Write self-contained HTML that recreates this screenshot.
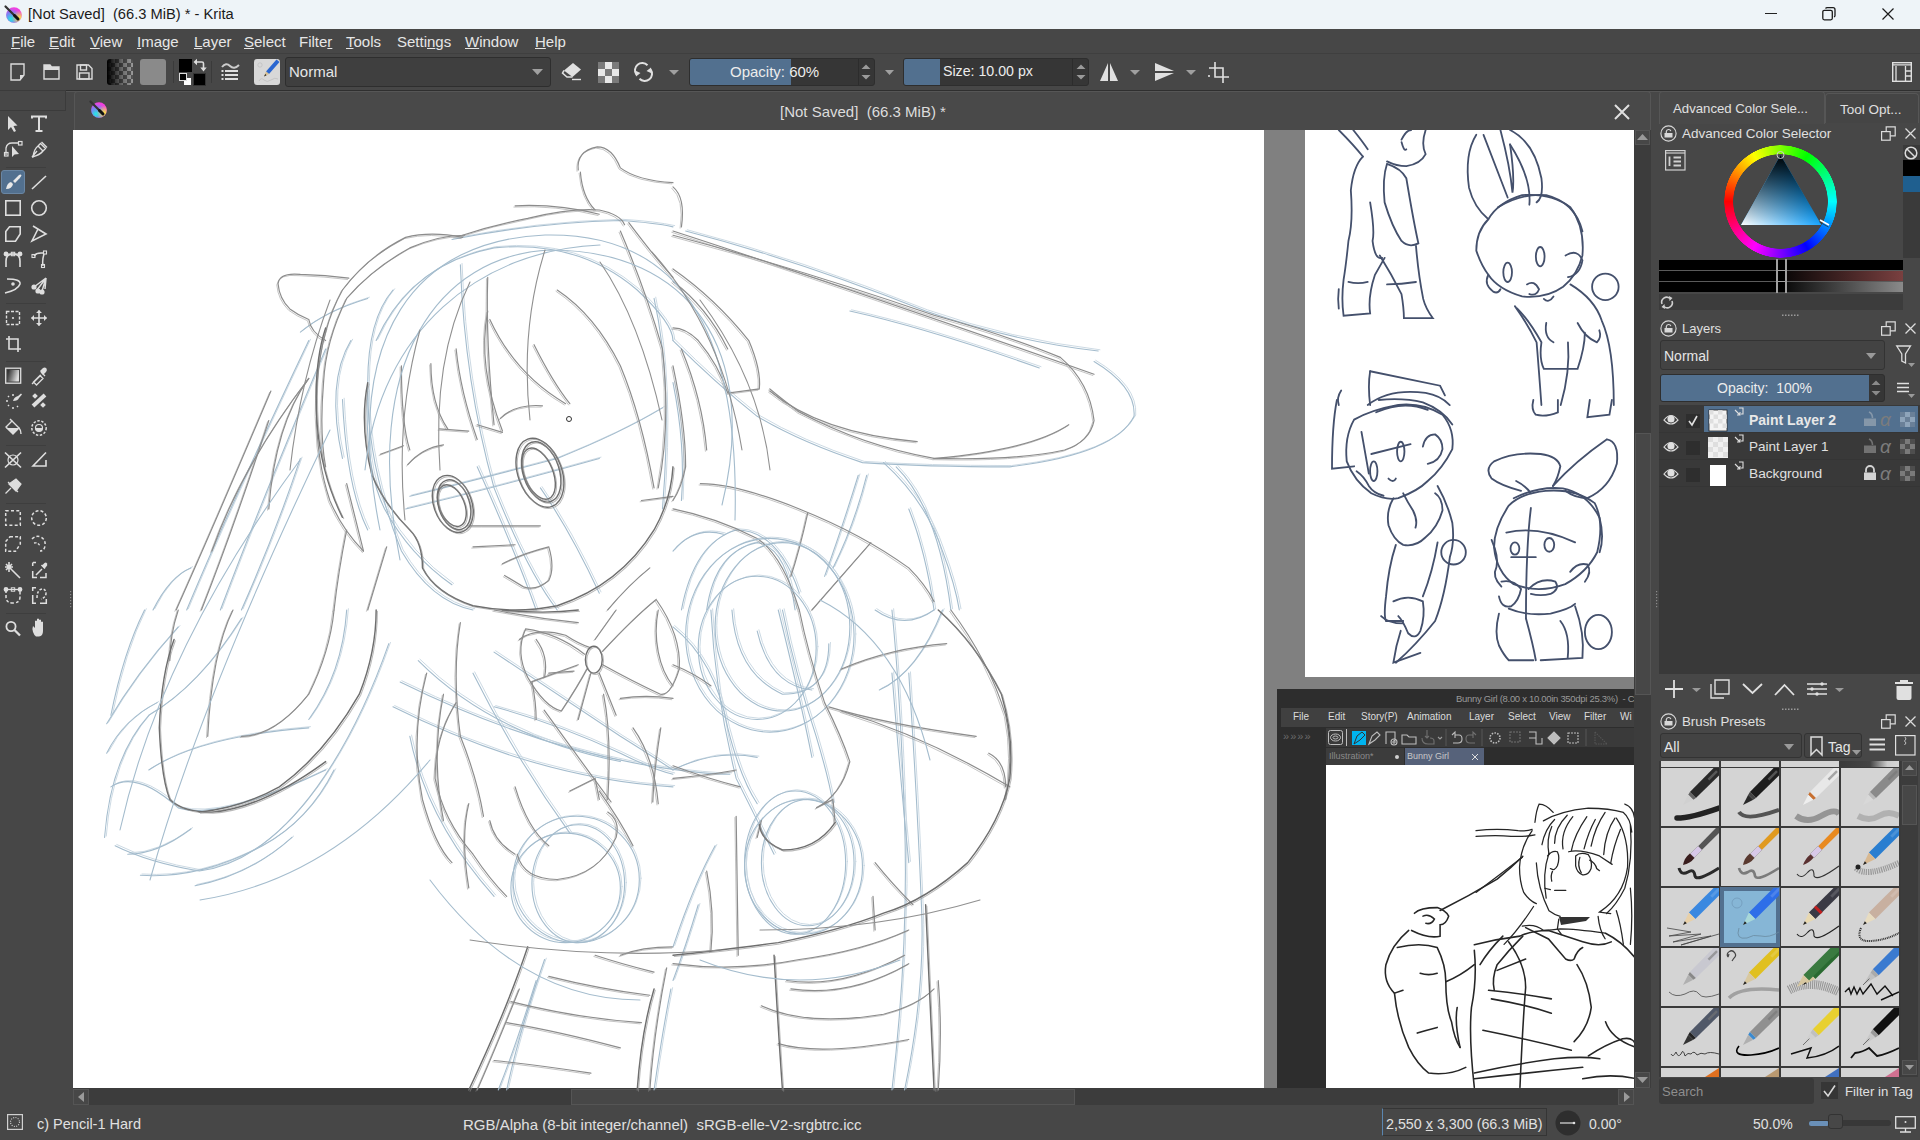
<!DOCTYPE html>
<html><head><meta charset="utf-8">
<style>
*{box-sizing:border-box;margin:0;padding:0}
html,body{width:1920px;height:1140px;overflow:hidden;background:#474747;font-family:"Liberation Sans",sans-serif;color:#e4e4e4;position:relative}
.a{position:absolute}
.t{position:absolute;white-space:nowrap;line-height:1}
svg{position:absolute;overflow:visible}
</style></head><body>
<!-- TITLE BAR -->
<div class="a" style="left:0;top:0;width:1920px;height:29px;background:#eef4f8"></div>
<svg style="left:4px;top:5px" width="18" height="18" viewBox="0 0 18 18">
 <defs><radialGradient id="kc1" cx="0.3" cy="0.75" r="0.7"><stop offset="0" stop-color="#20f0e0"/><stop offset="0.6" stop-color="#40a0ff" stop-opacity="0.6"/><stop offset="1" stop-color="#40a0ff" stop-opacity="0"/></radialGradient>
 <radialGradient id="kc2" cx="0.85" cy="0.7" r="0.5"><stop offset="0" stop-color="#ffe840"/><stop offset="1" stop-color="#ffe840" stop-opacity="0"/></radialGradient></defs>
 <circle cx="10" cy="10" r="7.8" fill="#f040e0"/><circle cx="10" cy="10" r="7.8" fill="url(#kc1)"/><circle cx="10" cy="10" r="7.8" fill="url(#kc2)"/>
 <path d="M1.5 1.5 L11 11" stroke="#333" stroke-width="2.2" stroke-linecap="round"/><path d="M10.5 10.5 L14 14" stroke="#111" stroke-width="3" stroke-linecap="round"/>
</svg>
<div class="t" style="left:28px;top:7px;font-size:14.7px;color:#1b1b1b">[Not Saved]&nbsp; (66.3 MiB) * - Krita</div>
<div class="a" style="left:1765px;top:13px;width:12px;height:1.3px;background:#222"></div>
<svg style="left:1822px;top:7px" width="14" height="14" viewBox="0 0 14 14"><rect x="0.8" y="3.3" width="9.5" height="9.5" rx="1.5" fill="none" stroke="#1b1b1b" stroke-width="1.3"/><path d="M3.5 1.5 Q4 0.7 5.2 0.7 H11 Q13 0.7 13 2.7 V8.5 Q13 9.6 12 10" fill="none" stroke="#1b1b1b" stroke-width="1.3"/></svg>
<svg style="left:1882px;top:8px" width="12" height="12" viewBox="0 0 12 12"><path d="M0.5 0.5 L11.5 11.5 M11.5 0.5 L0.5 11.5" stroke="#1b1b1b" stroke-width="1.2"/></svg>

<!-- MENU -->
<div class="a" style="left:0;top:53px;width:1920px;height:1px;background:#3f3f3f"></div>
<div id="menu" style="position:absolute;left:0;top:34px;font-size:15px;color:#e6e6e6">
<span class="t" style="left:11px"><u>F</u>ile</span>
<span class="t" style="left:49px"><u>E</u>dit</span>
<span class="t" style="left:90px"><u>V</u>iew</span>
<span class="t" style="left:137px"><u>I</u>mage</span>
<span class="t" style="left:194px"><u>L</u>ayer</span>
<span class="t" style="left:244px"><u>S</u>elect</span>
<span class="t" style="left:299px">Filte<u>r</u></span>
<span class="t" style="left:346px"><u>T</u>ools</span>
<span class="t" style="left:397px">Setti<u>n</u>gs</span>
<span class="t" style="left:465px"><u>W</u>indow</span>
<span class="t" style="left:535px"><u>H</u>elp</span>
</div>

<!-- TOOLBAR -->
<svg style="left:10px;top:63px" width="16" height="18" viewBox="0 0 16 18"><path d="M1 1 H14 V12 L10 17 H1 Z" fill="none" stroke="#dcdcdc" stroke-width="1.4"/><path d="M14 12 L10 17 V12 Z" fill="#dcdcdc"/></svg>
<svg style="left:43px;top:64px" width="17" height="16" viewBox="0 0 17 16"><path d="M1 15 V1 H7 L8.5 3 H16 V15 Z" fill="none" stroke="#dcdcdc" stroke-width="1.4"/><path d="M1 1 H7 L8.5 3 H16 V6 H1 Z" fill="#dcdcdc"/></svg>
<svg style="left:76px;top:64px" width="17" height="16" viewBox="0 0 17 16"><path d="M1 1 H12.5 L16 4.5 V15 H1 Z" fill="none" stroke="#dcdcdc" stroke-width="1.4"/><rect x="4.5" y="1" width="6" height="5" fill="none" stroke="#dcdcdc" stroke-width="1.4"/><rect x="3.5" y="9" width="9.5" height="6" fill="none" stroke="#dcdcdc" stroke-width="1.4"/></svg>
<div class="a" style="left:107px;top:59px;width:26px;height:26px;border-radius:3px;background:linear-gradient(90deg,#000 0%,rgba(0,0,0,0.3) 60%,rgba(0,0,0,0) 100%),repeating-conic-gradient(#9a9a9a 0 25%,#555 0 50%) 0 0/8px 8px"></div>
<div class="a" style="left:140px;top:59px;width:26px;height:26px;border-radius:3px;background:#8a8a8a"></div>
<div class="a" style="left:173px;top:61px;width:1px;height:22px;background:#3a3a3a"></div>
<div class="a" style="left:179px;top:59px;width:13px;height:13px;background:#000"></div>
<div class="a" style="left:193px;top:73px;width:13px;height:13px;background:#000;border:1px solid #333"></div>
<div class="a" style="left:184px;top:78px;width:7px;height:7px;background:#fff"></div>
<div class="a" style="left:179px;top:73px;width:8px;height:8px;background:#000;border:1px solid #ddd"></div>
<svg style="left:193px;top:58px" width="14" height="14" viewBox="0 0 14 14"><path d="M3 4 H9 Q10.5 4 10.5 5.5 V10" fill="none" stroke="#ddd" stroke-width="1.6"/><path d="M0.5 4 L4 0.8 V7.2 Z M10.5 13.5 L7.3 9.5 H13.7 Z" fill="#ddd"/></svg>
<div class="a" style="left:211px;top:61px;width:1px;height:22px;background:#3a3a3a"></div>
<svg style="left:221px;top:62px" width="20" height="20" viewBox="0 0 20 20"><path d="M1 5 Q5 0 9 4 T18 3" fill="none" stroke="#ccc" stroke-width="2"/><path d="M4 9 H17 M4 13 H17 M4 17 H17" stroke="#e0e0e0" stroke-width="1.8"/><path d="M0.5 9 H2.5 M0.5 13 H2.5 M0.5 17 H2.5" stroke="#e0e0e0" stroke-width="1.8"/></svg>
<div class="a" style="left:254px;top:59px;width:26px;height:26px;border-radius:3px;background:#d8d8d8"></div>
<svg style="left:254px;top:59px" width="26" height="26" viewBox="0 0 26 26"><circle cx="6" cy="6" r="2.2" fill="none" stroke="#bbb" stroke-width="0.6"/><path d="M5 22 Q7 18 10 21 T17 21 T24 20" fill="none" stroke="#bbb" stroke-width="0.7"/><path d="M25.5 3 L22.5 0.5 L12 12.5 L15 15 Z" fill="#2a66d0"/><path d="M12 12.5 L15 15 L10 17.5 Z" fill="#d8c090"/><path d="M10 17.5 L11.3 15 L12.5 16.3 Z" fill="#222"/></svg>
<!-- blend combo -->
<div class="a" style="left:285px;top:57px;width:266px;height:30px;border-radius:3px;background:#3f3f3f;border:1px solid #2e2e2e"></div>
<div class="t" style="left:289px;top:64px;font-size:15px;color:#e6e6e6">Normal</div>
<svg style="left:532px;top:69px" width="11" height="6" viewBox="0 0 11 6"><path d="M0 0 H11 L5.5 6 Z" fill="#a0a0a0"/></svg>
<!-- eraser etc -->
<svg style="left:562px;top:62px" width="20" height="19" viewBox="0 0 20 19"><path d="M11 1 L19 7.5 L10.5 15 L2 8.5 Z" fill="#e0e0e0"/><path d="M2 8.5 L0.5 11 L5 15 L10.5 15" fill="none" stroke="#e0e0e0" stroke-width="1.5"/><path d="M10 17.5 H19" stroke="#e0e0e0" stroke-width="1.4"/></svg>
<svg style="left:598px;top:62px" width="21" height="21" viewBox="0 0 21 21"><rect width="21" height="21" fill="#7a7a7a"/><path d="M7 0 H14 V7 H21 V14 H14 V21 H7 V14 H0 V7 H7 Z" fill="#e8e8e8"/><rect x="7" y="7" width="7" height="7" fill="#7a7a7a"/></svg>
<svg style="left:634px;top:63px" width="19" height="18" viewBox="0 0 19 18"><path d="M13.5 2.2 A7.3 7.3 0 0 0 2.3 11.5" fill="none" stroke="#e0e0e0" stroke-width="2"/><path d="M5.5 15.8 A7.3 7.3 0 0 0 16.7 6.5" fill="none" stroke="#e0e0e0" stroke-width="2"/><path d="M1 7.5 L2 13.5 L6.5 10 Z M18 10.5 L17 4.5 L12.5 8 Z" fill="#e0e0e0"/></svg>
<svg style="left:669px;top:70px" width="10" height="5" viewBox="0 0 10 5"><path d="M0 0 H10 L5 5 Z" fill="#a0a0a0"/></svg>
<!-- opacity slider -->
<div class="a" style="left:689px;top:58px;width:186px;height:28px;border-radius:3px;background:#363636;border:1px solid #2e2e2e;overflow:hidden"><div style="position:absolute;left:0;top:0;width:101px;height:28px;background:#52708f"></div><div style="position:absolute;left:168px;top:0;width:1px;height:28px;background:#2c2c2c"></div></div>
<svg style="left:860px;top:62px" width="12" height="20" viewBox="0 0 12 20"><path d="M1.5 7 L6 2.5 L10.5 7 Z M1.5 13 L6 17.5 L10.5 13 Z" fill="#9a9a9a"/></svg>
<div class="t" style="left:730px;top:64px;font-size:15px;color:#ececec">Opacity: 60%</div>
<svg style="left:885px;top:70px" width="9" height="5" viewBox="0 0 9 5"><path d="M0 0 H9 L4.5 5 Z" fill="#a0a0a0"/></svg>
<!-- size slider -->
<div class="a" style="left:903px;top:58px;width:186px;height:28px;border-radius:3px;background:#363636;border:1px solid #2e2e2e;overflow:hidden"><div style="position:absolute;left:0;top:0;width:36px;height:28px;background:#52708f"></div><div style="position:absolute;left:168px;top:0;width:1px;height:28px;background:#2c2c2c"></div></div>
<svg style="left:1075px;top:62px" width="12" height="20" viewBox="0 0 12 20"><path d="M1.5 7 L6 2.5 L10.5 7 Z M1.5 13 L6 17.5 L10.5 13 Z" fill="#9a9a9a"/></svg>
<div class="t" style="left:943px;top:64px;font-size:14.2px;color:#ececec">Size: 10.00 px</div>
<svg style="left:1099px;top:62px" width="20" height="20" viewBox="0 0 20 20"><path d="M9 1 L9 19 L1 19 Z M11 1 L11 19 L19 19 Z" fill="#e0e0e0"/></svg>
<svg style="left:1130px;top:70px" width="10" height="5" viewBox="0 0 10 5"><path d="M0 0 H10 L5 5 Z" fill="#a0a0a0"/></svg>
<svg style="left:1155px;top:62px" width="20" height="20" viewBox="0 0 20 20"><path d="M0 1 L19 9 L0 9 Z M0 11 L19 11 L0 19 Z" fill="#e0e0e0"/></svg>
<svg style="left:1186px;top:70px" width="10" height="5" viewBox="0 0 10 5"><path d="M0 0 H10 L5 5 Z" fill="#a0a0a0"/></svg>
<svg style="left:1209px;top:62px" width="20" height="21" viewBox="0 0 20 21"><path d="M6 0 V15 H20 M0 13 V15 M0 6 H14 V21" fill="none" stroke="#e0e0e0" stroke-width="1.6"/></svg>
<svg style="left:1892px;top:62px" width="20" height="20" viewBox="0 0 20 20"><rect x="0.7" y="0.7" width="18.6" height="18.6" fill="none" stroke="#e0e0e0" stroke-width="1.4"/><path d="M0.7 2.8 H19.3 M4 4 V19 M13.5 4 V19 M13.5 9 H19 M13.5 14 H19" fill="none" stroke="#e0e0e0" stroke-width="1.3"/></svg>
<div class="a" style="left:0;top:90px;width:1920px;height:1px;background:#2f2f2f"></div>
<div class="a" style="left:0;top:91px;width:1920px;height:1px;background:#565656"></div>

<!-- TOOLBOX -->
<div class="a" style="left:0;top:90px;width:66px;height:21px;border:1px solid #3b3b3b;border-left:none;background:#474747"></div>
<div class="a" style="left:6px;top:167px;width:40px;height:1px;background:#3e3e3e"></div>
<div class="a" style="left:6px;top:303px;width:40px;height:1px;background:#3e3e3e"></div>
<div class="a" style="left:6px;top:361px;width:40px;height:1px;background:#3e3e3e"></div>
<div class="a" style="left:6px;top:445px;width:40px;height:1px;background:#3e3e3e"></div>
<div class="a" style="left:6px;top:503px;width:40px;height:1px;background:#3e3e3e"></div>
<div class="a" style="left:6px;top:613px;width:40px;height:1px;background:#3e3e3e"></div>
<div class="a" style="left:1px;top:170px;width:24px;height:24px;border-radius:3px;background:#52708f;border:1px solid #6a86a3"></div>
<svg style="left:0;top:0" width="72" height="650" viewBox="0 0 72 650">
<g fill="none" stroke="#dedede" stroke-width="1.6">
 <!-- row1 arrow / T -->
 <path d="M8 116 L8 130 L11 127 L14 132 L16 131 L13.5 126 L17.5 125.5 Z" fill="#dedede" stroke="none"/>
 <path d="M32 118.5 V116.5 H46 V118.5 M39 116.5 V131 M35.5 131 H42.5" stroke-width="2"/>
 <!-- row2 shape select / calligraphy -->
 <path d="M6 155 V148 Q7 143 12 143 H19" stroke-width="1.3"/>
 <rect x="4.5" y="152.5" width="3.5" height="3.5" stroke-width="1.2"/><rect x="18.5" y="141.5" width="3.5" height="3.5" stroke-width="1.2"/>
 <path d="M12 146 L12 157 L14.5 154.5 L19 154 Z" fill="#dedede" stroke="none"/>
 <path d="M32 157 L37 151 M33 157 Q34 149 38 146 L43 151 Q40 155 32 157 Z M38 146 L40.5 143.5 L45.5 148.5 L43 151 M41.5 142 L47 147.5" stroke-width="1.4"/>
 <!-- row3 brush / line -->
 <path d="M6 189 Q7 183 11 182 L13 184 Q12 189 6 189 Z" fill="#e8e8e8" stroke="none"/>
 <path d="M13 181 L19 175 Q21 174 21.5 175.5 Q21 177 15 183 Z" fill="#e8e8e8" stroke="none"/>
 <path d="M32 189 L46 176" stroke-width="1.6"/>
 <!-- row4 rect / ellipse -->
 <rect x="5.8" y="200.8" width="14.4" height="14.4"/>
 <circle cx="39" cy="208" r="7.3"/>
 <!-- row5 polygon / polyline -->
 <path d="M9.5 226.8 H20.2 V234 L15.5 241.2 H5.8 V231.5 Z"/>
 <path d="M33 226 L46 234 L32 241 L38 229"/>
 <!-- row6 bezier / curve -->
 <path d="M6 267 V261 Q6 254 13 254 Q20 254 20 261 V267"/>
 <path d="M5 254 H21" stroke-width="1.1"/><circle cx="6" cy="254" r="1.6" fill="#dedede"/><circle cx="20" cy="254" r="1.6" fill="#dedede"/><rect x="11.3" y="252.3" width="3.4" height="3.4" stroke-width="1.1"/>
 <path d="M34 256 Q36 253 41 253 L44 253 M44 254 Q42 260 43 266" stroke-width="1.5"/><rect x="32" y="254.5" width="3" height="3" stroke-width="1.1"/><rect x="43.5" y="251" width="3" height="3" stroke-width="1.1"/><rect x="41.5" y="264.5" width="3" height="3" stroke-width="1.1"/>
 <!-- row7 freehand path / multibrush -->
 <path d="M7 279 Q21 279 20 284 Q18 290 5 293"/><circle cx="13" cy="284" r="1" fill="#dedede"/>
 <path d="M46 278 L34 287 M46 278 L37 290 M46 278 L42 291 M46 278 L45 289" stroke-width="1.5"/><circle cx="34" cy="287" r="1.8" fill="#dedede"/><circle cx="38" cy="291" r="1.8" fill="#dedede"/><circle cx="42" cy="292" r="1.8" fill="#dedede"/>
 <!-- row8 transform / move -->
 <rect x="6.5" y="311.5" width="13" height="13" stroke-width="1.4" stroke-dasharray="3 1.5"/><circle cx="13" cy="318" r="1.1" fill="#dedede" stroke="none"/>
 <path d="M31.5 318 H46.5 M39 310.5 V325.5" stroke-width="1.6"/><path d="M31 318 L34 315 V321 Z M47 318 L44 315 V321 Z M39 310 L36 313 H42 Z M39 326 L36 323 H42 Z" fill="#dedede" stroke="none"/>
 <!-- row9 crop -->
 <path d="M9 336 V349 H21 M6 339 H18 V352" stroke-width="1.6"/>
 <!-- row10 gradient / eyedropper -->
 <rect x="5.7" y="368.2" width="15" height="15" stroke-width="1.3"/>
 <path d="M33 383 L41 375 M33 383 L32 384 M41 372 L45 376 M33.5 382 L40 375.5 L43 378.5 L36.5 385 Z" stroke-width="1.3"/><path d="M40 371 L43 368 Q45 367 46.5 368.5 Q47.5 370 46 372 L43 375 Z" fill="#dedede" stroke="none"/>
 <!-- row11 smart patch / assistant-ish -->
 <path d="M13 401 Q14 397 18 396 L19 398 Q18 401 13 401 Z M18 396 L21 393.5 L22 394.5 L19 398" fill="#dedede" stroke="none"/>
 <path d="M6 401 H8 M13 407 V409 M8 396 L9 397 M8 406 L9 405 M17 406 L18 407 M13 394 V396" stroke-width="1.5"/>
 <path d="M33 406 L45 395" stroke-width="4"/><rect x="33" y="394" width="4" height="4" fill="#dedede" stroke="none" transform="rotate(45 35 396)"/><rect x="41" y="403" width="4" height="4" fill="#dedede" stroke="none" transform="rotate(45 43 405)"/>
 <!-- row12 fill / enclose fill -->
 <path d="M6 427 L12 421 L19 428 L13 434 Z" stroke-width="1.4"/><path d="M6 428 L19 428 L13 434 Z" fill="#dedede" stroke="none"/><path d="M12 421 L10 419" stroke-width="1.4"/><path d="M19 428 Q21 430 21 434" stroke-width="1.4"/>
 <circle cx="39" cy="428" r="7.2" stroke-width="1.5" stroke-dasharray="2.4 1.6"/><circle cx="39" cy="428" r="3.5" stroke-width="1.2"/><path d="M35.5 428 A3.5 3.5 0 0 0 42.5 428 Z" fill="#dedede" stroke="none"/>
 <!-- row13 assistant / measure -->
 <path d="M5 452.5 L21 467.5 M21 452.5 L5 467.5" stroke-width="1.7"/><circle cx="13" cy="460" r="5" stroke-width="1.2"/>
 <path d="M46 452.5 L33 466 H46 V460" stroke-width="1.6"/>
 <!-- row14 pin -->
 <path d="M5.5 493.5 L11 488" stroke-width="1.2"/><path d="M9 484 L16 479 L21 484 L16 491 Z M8 482 L18 492" fill="#dedede" stroke="#dedede" stroke-width="1.2"/>
 <!-- row15 rect select / ellipse select -->
 <rect x="5.7" y="510.7" width="14.6" height="14.6" stroke-width="1.5" stroke-dasharray="3 2.3"/>
 <circle cx="39" cy="518" r="7.3" stroke-width="1.5" stroke-dasharray="3 2.1"/>
 <!-- row16 poly select / freehand select -->
 <path d="M10 536.7 H20.3 V544 L15.5 551.3 H5.7 V541.5 Z" stroke-width="1.5" stroke-dasharray="3 2.1"/>
 <path d="M32 539 Q36 535 41 537 Q46 540 45 546 Q44 551 40 551" stroke-width="1.5" stroke-dasharray="3 2.1"/><path d="M34 543 Q38 542 40 546" stroke-width="1.3" stroke-dasharray="2.5 1.5"/>
 <!-- row17 magic wand / color select -->
 <path d="M6 564 L12 570 M6 570 L12 564 M9 562 V572 M5 567 H13 M11 569 L20 578" stroke-width="1.6"/>
 <path d="M33 562.5 H36 M32.7 562.5 V566 M32.7 571 V577.5 H37 M40 577.5 H46 V573" stroke-width="1.5"/><path d="M36 575 L42 569 M41.5 565 L45 568.5" stroke-width="1.5"/><path d="M42 565.5 L44.5 563 Q46 562 47 563.5 Q48 565 46 567 L44.5 568.5 Z" fill="#dedede" stroke="none"/>
 <!-- row18 bezier select / magnetic -->
 <path d="M6 590 V597 Q6 603 13 603 Q20 603 20 597 V590" stroke-width="1.5" stroke-dasharray="3 2"/><path d="M6 589.5 H20" stroke-width="1.3"/><circle cx="6" cy="589.5" r="1.6" fill="#dedede"/><circle cx="20" cy="589.5" r="1.6" fill="#dedede"/><rect x="11.3" y="587.8" width="3.4" height="3.4" stroke-width="1"/>
 <path d="M32.7 591 V587.7 H36 M32.7 595 V603.3 H36 M40 603.3 H46.3 V599" stroke-width="1.5"/><path d="M37 598 Q37 590 42 589 Q46 589 46 594 Q45 598 41 599" stroke-width="1.5" stroke-dasharray="2.6 1.6"/>
 <!-- row19 zoom / hand -->
 <circle cx="11" cy="626.5" r="4.6" stroke-width="1.8"/><path d="M14.5 630 L20 635.5" stroke-width="2.3"/>
 <path d="M33 632 Q32 628 33 626 L35 628 V621 Q36 620 37 621 V626 V619 Q38 618 39 619 V626 V620 Q40 619 41 620 V626 V622 Q42 621 43 622 V631 Q43 636 39 636.5 H36 Q34 635 33 632 Z" fill="#dedede" stroke="none"/>
</g>
<!-- gradient fill -->
<defs><linearGradient id="gr1" x1="0" y1="0" x2="1" y2="0.3"><stop offset="0" stop-color="#222"/><stop offset="1" stop-color="#ddd"/></linearGradient></defs>
<rect x="7.5" y="370" width="11.5" height="11.5" fill="url(#gr1)"/>
<!-- splitter dots -->
<g fill="#8a8a8a"><rect x="70" y="591" width="1.2" height="1.2"/><rect x="70" y="594" width="1.2" height="1.2"/><rect x="70" y="597" width="1.2" height="1.2"/><rect x="70" y="600" width="1.2" height="1.2"/><rect x="70" y="603" width="1.2" height="1.2"/><rect x="70" y="606" width="1.2" height="1.2"/></g>
</svg>

<!-- DOC TAB BAR -->
<div class="a" style="left:74px;top:91px;width:1577px;height:45px;border:1px solid #565656;border-bottom:none;border-radius:4px 4px 0 0;background:#494949"></div>
<svg style="left:89px;top:100px" width="18" height="18" viewBox="0 0 18 18">
 <defs><radialGradient id="kd1" cx="0.3" cy="0.75" r="0.7"><stop offset="0" stop-color="#20f0e0"/><stop offset="0.6" stop-color="#40a0ff" stop-opacity="0.6"/><stop offset="1" stop-color="#40a0ff" stop-opacity="0"/></radialGradient>
 <radialGradient id="kd2" cx="0.85" cy="0.7" r="0.5"><stop offset="0" stop-color="#ffe840"/><stop offset="1" stop-color="#ffe840" stop-opacity="0"/></radialGradient></defs>
 <circle cx="10" cy="10" r="7.8" fill="#f040e0"/><circle cx="10" cy="10" r="7.8" fill="url(#kd1)"/><circle cx="10" cy="10" r="7.8" fill="url(#kd2)"/>
 <path d="M1.5 1.5 L11 11" stroke="#333" stroke-width="2.2" stroke-linecap="round"/><path d="M10.5 10.5 L14 14" stroke="#111" stroke-width="3" stroke-linecap="round"/>
</svg>
<div class="t" style="left:780px;top:104px;font-size:15px;color:#dcdcdc">[Not Saved]&nbsp; (66.3 MiB) *</div>
<svg style="left:1614px;top:104px" width="16" height="16" viewBox="0 0 16 16"><path d="M1 1 L15 15 M15 1 L1 15" stroke="#e0e0e0" stroke-width="2"/></svg>

<!-- CANVAS -->
<div class="a" style="left:73px;top:130px;width:1191px;height:958px;background:#fff"></div>
<div class="a" style="left:1264px;top:130px;width:370px;height:958px;background:#808080"></div>
<div class="a" style="left:1305px;top:130px;width:329px;height:547px;background:#fff"></div>

<!-- V SCROLLBAR -->
<div class="a" style="left:1634px;top:130px;width:17px;height:958px;background:#3c3c3c"></div>
<div class="a" style="left:1635px;top:130px;width:15px;height:15px;border:1px solid #555;background:#474747"></div>
<svg style="left:1637px;top:134px" width="11" height="6" viewBox="0 0 11 6"><path d="M0 6 L5.5 0 L11 6 Z" fill="#9a9a9a"/></svg>
<div class="a" style="left:1635px;top:433px;width:16px;height:262px;border:1px solid #555;background:#474747"></div>
<div class="a" style="left:1635px;top:1072px;width:15px;height:16px;border:1px solid #555;background:#474747"></div>
<svg style="left:1637px;top:1077px" width="11" height="6" viewBox="0 0 11 6"><path d="M0 0 L5.5 6 L11 0 Z" fill="#9a9a9a"/></svg>

<!-- H SCROLLBAR -->
<div class="a" style="left:73px;top:1088px;width:1561px;height:17px;background:#3c3c3c"></div>
<div class="a" style="left:73px;top:1089px;width:16px;height:16px;border:1px solid #555;background:#474747"></div>
<svg style="left:78px;top:1092px" width="6" height="10" viewBox="0 0 6 10"><path d="M6 0 L0 5 L6 10 Z" fill="#9a9a9a"/></svg>
<div class="a" style="left:571px;top:1089px;width:504px;height:16px;border:1px solid #555;background:#474747"></div>
<div class="a" style="left:1618px;top:1089px;width:16px;height:16px;border:1px solid #555;background:#474747"></div>
<svg style="left:1624px;top:1092px" width="6" height="10" viewBox="0 0 6 10"><path d="M0 0 L6 5 L0 10 Z" fill="#9a9a9a"/></svg>
<div class="a" style="left:1634px;top:1088px;width:17px;height:17px;background:#474747"></div>

<!-- STATUS BAR -->
<svg style="left:7px;top:1114px" width="16" height="16" viewBox="0 0 16 16"><rect x="0.6" y="0.6" width="14.8" height="14.8" fill="none" stroke="#d0d0d0" stroke-width="1.2"/><circle cx="8" cy="8" r="4.5" fill="none" stroke="#d0d0d0" stroke-width="1.2" stroke-dasharray="1 1.35"/></svg>
<div class="t" style="left:37px;top:1117px;font-size:14.5px;color:#e0e0e0">c) Pencil-1 Hard</div>
<div class="t" style="left:463px;top:1117px;font-size:15px;color:#e0e0e0">RGB/Alpha (8-bit integer/channel)&nbsp; sRGB-elle-V2-srgbtrc.icc</div>
<div class="a" style="left:1382px;top:1108px;width:165px;height:28px;border:1px solid #353535;border-left:1px solid #5a86b0"></div>
<div class="t" style="left:1386px;top:1117px;font-size:14.3px;color:#e0e0e0">2,550 <u>x</u> 3,300 (66.3 MiB)</div>
<svg style="left:1555px;top:1110px" width="26" height="26" viewBox="0 0 26 26"><circle cx="13" cy="13" r="12.5" fill="#2e2e2e"/><path d="M5 13 H18" stroke="#e0e0e0" stroke-width="1.2"/><circle cx="19" cy="13" r="1.3" fill="#e0e0e0"/></svg>
<div class="t" style="left:1589px;top:1117px;font-size:14px;color:#e0e0e0">0.00°</div>
<div class="t" style="left:1753px;top:1117px;font-size:14px;color:#e0e0e0">50.0%</div>
<div class="a" style="left:1809px;top:1120px;width:82px;height:6px;border-radius:3px;background:#383838"></div>
<div class="a" style="left:1809px;top:1121px;width:20px;height:5px;border-radius:2px;background:#6a90b8"></div>
<div class="a" style="left:1828px;top:1114px;width:15px;height:15px;border-radius:3px;background:#474747;border:1px solid #333"></div>
<svg style="left:1895px;top:1116px" width="21" height="17" viewBox="0 0 21 17"><rect x="0.7" y="0.7" width="19.6" height="11.5" fill="none" stroke="#e0e0e0" stroke-width="1.3"/><path d="M10.5 12 V15.5 M5 16 H16" stroke="#e0e0e0" stroke-width="1.3"/><circle cx="10.5" cy="6" r="1" fill="#e0e0e0"/></svg>

<svg style="left:73px;top:130px" width="1191" height="958" viewBox="73 130 1191 958"><g fill="none" stroke-linecap="round">
<g transform="translate(73 130) scale(0.42105)">
<g stroke="#a4bccd" stroke-width="2.6"><path d="M720 500 Q800 320 1000 280 Q1200 260 1340 380 Q1425 460 1425 500"/><path d="M700 620 Q700 800 780 1000 Q850 1120 950 1140"/><path d="M640 640 Q650 850 700 950"/><path d="M660 500 Q600 600 640 780"/><path d="M760 380 Q700 450 700 600 Q690 800 740 900 Q800 1010 900 1080"/><path d="M800 870 Q1000 820 1150 780 Q1300 720 1400 660"/><path d="M790 900 Q1000 850 1250 780"/><path d="M920 320 Q930 600 1000 850 Q1080 1050 1150 1140"/><path d="M960 800 Q1050 1000 1100 1140"/><path d="M1110 850 Q1180 950 1250 1100"/><path d="M270 1140 Q370 900 560 500"/><path d="M350 1140 Q440 900 600 520"/><path d="M400 1140 Q480 960 540 780"/><path d="M540 480 Q600 430 700 400"/><path d="M900 260 Q1100 220 1300 215 Q1380 220 1425 230"/><path d="M1380 400 Q1425 600 1400 900"/><path d="M190 1140 Q230 1060 280 1040"/></g>
<g stroke="#a4bccd" stroke-width="2.2" opacity="0.6" transform="translate(4 -3)"><path d="M720 500 Q800 320 1000 280 Q1200 260 1340 380 Q1425 460 1425 500"/><path d="M700 620 Q700 800 780 1000 Q850 1120 950 1140"/><path d="M640 640 Q650 850 700 950"/><path d="M660 500 Q600 600 640 780"/><path d="M760 380 Q700 450 700 600 Q690 800 740 900 Q800 1010 900 1080"/><path d="M800 870 Q1000 820 1150 780 Q1300 720 1400 660"/><path d="M790 900 Q1000 850 1250 780"/><path d="M920 320 Q930 600 1000 850 Q1080 1050 1150 1140"/><path d="M960 800 Q1050 1000 1100 1140"/><path d="M1110 850 Q1180 950 1250 1100"/><path d="M270 1140 Q370 900 560 500"/><path d="M350 1140 Q440 900 600 520"/><path d="M400 1140 Q480 960 540 780"/><path d="M540 480 Q600 430 700 400"/><path d="M900 260 Q1100 220 1300 215 Q1380 220 1425 230"/><path d="M1380 400 Q1425 600 1400 900"/><path d="M190 1140 Q230 1060 280 1040"/></g>
<g stroke="#8c8c8c" stroke-width="2.8"><path d="M655 352 Q600 345 540 343 Q490 338 487 365 Q490 400 515 425 Q535 440 560 450 Q565 480 600 500"/><path d="M925 255 Q850 240 790 255 Q700 300 640 380 Q590 470 580 600 Q570 760 610 880 Q640 950 690 1000"/><path d="M930 250 Q870 250 800 280 Q710 330 650 400 Q600 500 595 600 Q585 720 600 800"/><path d="M925 250 Q1000 225 1080 210 Q1180 185 1250 190 Q1300 200 1310 225"/><path d="M1050 180 Q1150 175 1250 200"/><path d="M1200 95 Q1195 50 1245 40 Q1280 40 1300 90 Q1340 120 1425 125"/><path d="M1205 100 Q1210 160 1240 190"/><path d="M985 350 Q980 500 1000 700"/><path d="M985 430 Q960 560 1020 715"/><path d="M1150 380 Q1240 440 1300 560 Q1350 680 1380 850"/><path d="M1095 510 Q1140 600 1180 650"/><path d="M990 450 Q1050 580 1170 650"/><path d="M910 520 Q920 620 960 735"/><path d="M850 555 Q850 650 890 710"/><path d="M780 560 Q780 700 800 760"/><path d="M870 710 L940 715"/><path d="M960 700 L1020 718"/><path d="M1320 220 Q1380 300 1425 350"/><path d="M1300 240 Q1360 380 1400 520 Q1420 700 1390 850"/><path d="M1015 685 Q1050 650 1115 655"/><path d="M795 795 Q830 755 880 748"/><path d="M730 770 L785 750"/><path d="M1020 1030 Q1070 1005 1130 990 Q1145 1040 1130 1070 Q1100 1095 1070 1085 L1025 1058"/><path d="M940 940 Q1000 940 1110 940"/><path d="M950 990 L1050 985"/><path d="M245 1140 Q330 950 470 620"/><path d="M305 1140 Q380 950 465 690"/><path d="M330 1000 Q400 800 560 590"/><path d="M465 900 Q480 700 560 590"/><path d="M620 1140 Q630 1050 650 950"/><path d="M700 1140 L745 990"/><path d="M650 840 Q670 920 690 1000"/><path d="M1270 1140 Q1320 1080 1370 1040"/><path d="M1350 880 L1425 870"/></g>
<g stroke="#8c8c8c" stroke-width="2.2" opacity="0.55" transform="translate(-3 3)"><path d="M655 352 Q600 345 540 343 Q490 338 487 365 Q490 400 515 425 Q535 440 560 450 Q565 480 600 500"/><path d="M925 255 Q850 240 790 255 Q700 300 640 380 Q590 470 580 600 Q570 760 610 880 Q640 950 690 1000"/><path d="M930 250 Q870 250 800 280 Q710 330 650 400 Q600 500 595 600 Q585 720 600 800"/><path d="M925 250 Q1000 225 1080 210 Q1180 185 1250 190 Q1300 200 1310 225"/><path d="M1050 180 Q1150 175 1250 200"/><path d="M1200 95 Q1195 50 1245 40 Q1280 40 1300 90 Q1340 120 1425 125"/><path d="M1205 100 Q1210 160 1240 190"/><path d="M985 350 Q980 500 1000 700"/><path d="M985 430 Q960 560 1020 715"/><path d="M1150 380 Q1240 440 1300 560 Q1350 680 1380 850"/><path d="M1095 510 Q1140 600 1180 650"/><path d="M990 450 Q1050 580 1170 650"/><path d="M910 520 Q920 620 960 735"/><path d="M850 555 Q850 650 890 710"/><path d="M780 560 Q780 700 800 760"/><path d="M870 710 L940 715"/><path d="M960 700 L1020 718"/><path d="M1320 220 Q1380 300 1425 350"/><path d="M1300 240 Q1360 380 1400 520 Q1420 700 1390 850"/><path d="M1015 685 Q1050 650 1115 655"/><path d="M795 795 Q830 755 880 748"/><path d="M730 770 L785 750"/><path d="M1020 1030 Q1070 1005 1130 990 Q1145 1040 1130 1070 Q1100 1095 1070 1085 L1025 1058"/><path d="M940 940 Q1000 940 1110 940"/><path d="M950 990 L1050 985"/><path d="M245 1140 Q330 950 470 620"/><path d="M305 1140 Q380 950 465 690"/><path d="M330 1000 Q400 800 560 590"/><path d="M465 900 Q480 700 560 590"/><path d="M620 1140 Q630 1050 650 950"/><path d="M700 1140 L745 990"/><path d="M650 840 Q670 920 690 1000"/><path d="M1270 1140 Q1320 1080 1370 1040"/><path d="M1350 880 L1425 870"/></g>
<g stroke="#6e6e6e" stroke-width="3.4"><path d="M700 600 Q680 700 710 820 Q740 890 800 950 Q830 980 830 1040 Q860 1100 950 1130 Q1050 1150 1150 1130 Q1300 1080 1380 950 Q1420 880 1425 800"/><path d="M600 470 Q570 560 580 700 Q590 820 640 920"/><ellipse cx="902" cy="888" rx="45" ry="70" transform="rotate(-20 902 888)"/><ellipse cx="905" cy="890" rx="37" ry="61" transform="rotate(-18 905 890)"/><ellipse cx="900" cy="892" rx="30" ry="52" transform="rotate(-22 900 892)"/><ellipse cx="1109" cy="814" rx="52" ry="85" transform="rotate(-20 1109 814)"/><ellipse cx="1112" cy="812" rx="43" ry="74" transform="rotate(-18 1112 812)"/><ellipse cx="1106" cy="816" rx="34" ry="64" transform="rotate(-22 1106 816)"/></g>
<g stroke="#8c8c8c" stroke-width="2.4" opacity="0.6" transform="translate(3 3)"><path d="M700 600 Q680 700 710 820 Q740 890 800 950 Q830 980 830 1040 Q860 1100 950 1130 Q1050 1150 1150 1130 Q1300 1080 1380 950 Q1420 880 1425 800"/><path d="M600 470 Q570 560 580 700 Q590 820 640 920"/><ellipse cx="902" cy="888" rx="45" ry="70" transform="rotate(-20 902 888)"/><ellipse cx="905" cy="890" rx="37" ry="61" transform="rotate(-18 905 890)"/><ellipse cx="900" cy="892" rx="30" ry="52" transform="rotate(-22 900 892)"/><ellipse cx="1109" cy="814" rx="52" ry="85" transform="rotate(-20 1109 814)"/><ellipse cx="1112" cy="812" rx="43" ry="74" transform="rotate(-18 1112 812)"/><ellipse cx="1106" cy="816" rx="34" ry="64" transform="rotate(-22 1106 816)"/></g>
</g>
<g transform="translate(673 130) scale(0.42105)">
<g stroke="#a4bccd" stroke-width="2.6"><path d="M30 240 Q300 310 600 430 Q800 500 1010 525"/><path d="M420 430 Q600 470 870 565"/><path d="M1000 550 Q1100 610 1095 680 Q1050 770 800 800 Q600 800 450 790 Q300 740 200 680 Q100 600 0 500"/><path d="M440 820 Q400 950 360 1060"/><path d="M460 820 Q430 940 380 1040"/><path d="M500 790 Q600 880 640 1000 Q670 1080 680 1140"/><path d="M530 800 Q630 900 660 1140"/><path d="M560 900 Q600 1000 620 1140"/><path d="M20 1140 Q50 980 150 950 Q250 950 300 1100"/><path d="M80 1140 Q100 1000 200 980 Q270 990 290 1140"/><path d="M0 1000 Q50 940 120 960"/><path d="M0 600 Q30 750 20 880"/></g>
<g stroke="#a4bccd" stroke-width="2.2" opacity="0.6" transform="translate(4 -3)"><path d="M30 240 Q300 310 600 430 Q800 500 1010 525"/><path d="M420 430 Q600 470 870 565"/><path d="M1000 550 Q1100 610 1095 680 Q1050 770 800 800 Q600 800 450 790 Q300 740 200 680 Q100 600 0 500"/><path d="M440 820 Q400 950 360 1060"/><path d="M460 820 Q430 940 380 1040"/><path d="M500 790 Q600 880 640 1000 Q670 1080 680 1140"/><path d="M530 800 Q630 900 660 1140"/><path d="M560 900 Q600 1000 620 1140"/><path d="M20 1140 Q50 980 150 950 Q250 950 300 1100"/><path d="M80 1140 Q100 1000 200 980 Q270 990 290 1140"/><path d="M0 1000 Q50 940 120 960"/><path d="M0 600 Q30 750 20 880"/></g>
<g stroke="#8c8c8c" stroke-width="2.8"><path d="M0 250 Q300 330 620 440 Q800 490 920 540 Q990 600 1000 690 Q990 740 930 760 Q820 785 620 780 Q450 750 300 670 Q260 640 230 615"/><path d="M0 240 Q400 370 1000 580"/><path d="M230 620 Q350 720 580 740"/><path d="M940 700 Q850 760 620 780"/><path d="M0 330 Q100 400 180 500 Q210 570 205 615 L130 625 Q110 560 60 500 Q30 470 0 470"/><path d="M20 520 Q70 640 80 760"/><path d="M0 560 Q30 700 30 800 Q20 850 0 880"/><path d="M0 135 Q30 160 20 230"/><path d="M65 840 Q150 840 300 900 Q450 960 560 1040 Q600 1080 620 1120"/><path d="M0 900 Q100 920 200 970 Q260 1010 300 1140"/><path d="M320 910 Q300 1000 280 1060"/><path d="M470 980 Q400 1060 330 1140"/><path d="M0 360 Q80 420 130 520"/></g>
<g stroke="#8c8c8c" stroke-width="2.2" opacity="0.55" transform="translate(-3 3)"><path d="M0 250 Q300 330 620 440 Q800 490 920 540 Q990 600 1000 690 Q990 740 930 760 Q820 785 620 780 Q450 750 300 670 Q260 640 230 615"/><path d="M0 240 Q400 370 1000 580"/><path d="M230 620 Q350 720 580 740"/><path d="M940 700 Q850 760 620 780"/><path d="M0 330 Q100 400 180 500 Q210 570 205 615 L130 625 Q110 560 60 500 Q30 470 0 470"/><path d="M20 520 Q70 640 80 760"/><path d="M0 560 Q30 700 30 800 Q20 850 0 880"/><path d="M0 135 Q30 160 20 230"/><path d="M65 840 Q150 840 300 900 Q450 960 560 1040 Q600 1080 620 1120"/><path d="M0 900 Q100 920 200 970 Q260 1010 300 1140"/><path d="M320 910 Q300 1000 280 1060"/><path d="M470 980 Q400 1060 330 1140"/><path d="M0 360 Q80 420 130 520"/></g>
<g stroke="#6e6e6e" stroke-width="3.4"></g>
<g stroke="#8c8c8c" stroke-width="2.4" opacity="0.6" transform="translate(3 3)"></g>
</g>
<g transform="translate(73 610) scale(0.42105)">
<g stroke="#a4bccd" stroke-width="2.6"><path d="M80 270 Q150 150 250 40"/><path d="M75 540 Q90 350 180 250 Q300 180 400 20"/><path d="M90 420 Q150 380 250 470 Q350 500 600 380"/><path d="M100 560 Q180 600 300 620 Q450 600 580 420 Q680 280 750 80"/><path d="M160 630 Q300 640 450 560 Q560 500 620 380"/><path d="M290 655 Q420 630 520 540"/><path d="M130 580 Q200 580 280 520"/><path d="M80 340 Q120 260 200 220"/><path d="M180 380 Q300 300 560 280"/><path d="M950 150 Q1050 350 1180 530"/><path d="M1000 100 Q1150 200 1300 300 Q1380 350 1425 380"/><path d="M1000 230 Q1150 270 1300 340 Q1380 380 1425 390"/><path d="M1120 830 Q1060 1000 1030 1140"/><path d="M1100 880 Q1050 1040 1010 1140"/><path d="M1420 900 Q1400 1000 1380 1140"/><path d="M800 300 Q840 500 1000 680"/><path d="M170 0 Q120 100 90 250"/><path d="M650 0 Q640 150 560 260"/><path d="M777 171 Q1100 330 1401 375 Q1500 390 1560 390"/><path d="M760 230 Q1100 400 1425 420"/><path d="M820 120 Q1000 300 1300 360"/><ellipse cx="1195" cy="640" rx="150" ry="150" transform="rotate(0 1195 640)"/><ellipse cx="1200" cy="650" rx="110" ry="140" transform="rotate(0 1200 650)"/><ellipse cx="1170" cy="660" rx="130" ry="130" transform="rotate(0 1170 660)"/></g>
<g stroke="#a4bccd" stroke-width="2.2" opacity="0.6" transform="translate(4 -3)"><path d="M80 270 Q150 150 250 40"/><path d="M75 540 Q90 350 180 250 Q300 180 400 20"/><path d="M90 420 Q150 380 250 470 Q350 500 600 380"/><path d="M100 560 Q180 600 300 620 Q450 600 580 420 Q680 280 750 80"/><path d="M160 630 Q300 640 450 560 Q560 500 620 380"/><path d="M290 655 Q420 630 520 540"/><path d="M130 580 Q200 580 280 520"/><path d="M80 340 Q120 260 200 220"/><path d="M180 380 Q300 300 560 280"/><path d="M950 150 Q1050 350 1180 530"/><path d="M1000 100 Q1150 200 1300 300 Q1380 350 1425 380"/><path d="M1000 230 Q1150 270 1300 340 Q1380 380 1425 390"/><path d="M1120 830 Q1060 1000 1030 1140"/><path d="M1100 880 Q1050 1040 1010 1140"/><path d="M1420 900 Q1400 1000 1380 1140"/><path d="M800 300 Q840 500 1000 680"/><path d="M170 0 Q120 100 90 250"/><path d="M650 0 Q640 150 560 260"/><path d="M777 171 Q1100 330 1401 375 Q1500 390 1560 390"/><path d="M760 230 Q1100 400 1425 420"/><path d="M820 120 Q1000 300 1300 360"/><ellipse cx="1195" cy="640" rx="150" ry="150" transform="rotate(0 1195 640)"/><ellipse cx="1200" cy="650" rx="110" ry="140" transform="rotate(0 1200 650)"/><ellipse cx="1170" cy="660" rx="130" ry="130" transform="rotate(0 1170 660)"/></g>
<g stroke="#8c8c8c" stroke-width="2.8"><path d="M250 0 Q230 60 230 120"/><path d="M620 0 Q610 100 560 200 Q480 300 400 300"/><path d="M380 0 Q330 100 320 300"/><path d="M920 30 Q900 150 920 300 Q960 400 975 490"/><path d="M910 220 Q860 300 860 400 Q880 500 950 580 Q990 640 1030 680"/><path d="M940 460 Q920 540 940 660"/><path d="M990 500 Q1000 550 1050 580"/><path d="M1055 580 Q1070 640 1150 640 Q1250 630 1290 540 Q1300 500 1270 480"/><path d="M1060 70 Q1100 40 1170 60 Q1200 80 1230 90"/><path d="M1215 105 Q1150 55 1075 45 Q1050 100 1080 160 Q1120 230 1160 240 Q1200 180 1222 138"/><path d="M1258 98 Q1330 20 1385 -25 Q1445 60 1440 140 Q1420 205 1395 200 Q1330 170 1258 130"/><path d="M1230 150 L1200 260"/><path d="M1250 150 L1290 250"/><path d="M1100 70 Q1130 110 1120 160"/><path d="M1119 238 Q1200 350 1278 456"/><path d="M1396 280 Q1380 380 1377 456"/><path d="M1090 170 L1200 130"/><path d="M1130 150 L1190 145"/><path d="M1090 170 Q1100 220 1100 260"/><path d="M1260 200 Q1280 300 1270 450"/><path d="M1180 430 L1240 400 L1250 450"/><path d="M1330 280 Q1380 350 1390 460"/><path d="M1240 70 L1290 0"/><path d="M1390 0 Q1380 50 1390 100 Q1400 150 1425 180"/><path d="M1000 0 Q1100 20 1200 30"/><path d="M1060 900 Q1000 1050 960 1140"/><path d="M1300 820 Q1350 800 1425 800"/><path d="M1410 850 Q1380 1000 1370 1140"/><path d="M1040 930 Q1200 970 1350 980"/><path d="M1030 980 Q1150 1000 1300 1040"/><path d="M1000 1070 Q1100 1080 1230 1100"/><path d="M1240 820 Q1300 840 1380 860"/><path d="M1130 870 Q1250 900 1370 915"/><path d="M1300 210 Q1360 200 1425 210"/><path d="M840 150 Q800 300 830 450 Q860 560 900 600"/><path d="M880 200 Q850 350 880 500"/><path d="M1050 420 Q1080 520 1130 560"/><path d="M1250 430 Q1300 500 1330 560"/></g>
<g stroke="#8c8c8c" stroke-width="2.2" opacity="0.55" transform="translate(-3 3)"><path d="M250 0 Q230 60 230 120"/><path d="M620 0 Q610 100 560 200 Q480 300 400 300"/><path d="M380 0 Q330 100 320 300"/><path d="M920 30 Q900 150 920 300 Q960 400 975 490"/><path d="M910 220 Q860 300 860 400 Q880 500 950 580 Q990 640 1030 680"/><path d="M940 460 Q920 540 940 660"/><path d="M990 500 Q1000 550 1050 580"/><path d="M1055 580 Q1070 640 1150 640 Q1250 630 1290 540 Q1300 500 1270 480"/><path d="M1060 70 Q1100 40 1170 60 Q1200 80 1230 90"/><path d="M1215 105 Q1150 55 1075 45 Q1050 100 1080 160 Q1120 230 1160 240 Q1200 180 1222 138"/><path d="M1258 98 Q1330 20 1385 -25 Q1445 60 1440 140 Q1420 205 1395 200 Q1330 170 1258 130"/><path d="M1230 150 L1200 260"/><path d="M1250 150 L1290 250"/><path d="M1100 70 Q1130 110 1120 160"/><path d="M1119 238 Q1200 350 1278 456"/><path d="M1396 280 Q1380 380 1377 456"/><path d="M1090 170 L1200 130"/><path d="M1130 150 L1190 145"/><path d="M1090 170 Q1100 220 1100 260"/><path d="M1260 200 Q1280 300 1270 450"/><path d="M1180 430 L1240 400 L1250 450"/><path d="M1330 280 Q1380 350 1390 460"/><path d="M1240 70 L1290 0"/><path d="M1390 0 Q1380 50 1390 100 Q1400 150 1425 180"/><path d="M1000 0 Q1100 20 1200 30"/><path d="M1060 900 Q1000 1050 960 1140"/><path d="M1300 820 Q1350 800 1425 800"/><path d="M1410 850 Q1380 1000 1370 1140"/><path d="M1040 930 Q1200 970 1350 980"/><path d="M1030 980 Q1150 1000 1300 1040"/><path d="M1000 1070 Q1100 1080 1230 1100"/><path d="M1240 820 Q1300 840 1380 860"/><path d="M1130 870 Q1250 900 1370 915"/><path d="M1300 210 Q1360 200 1425 210"/><path d="M840 150 Q800 300 830 450 Q860 560 900 600"/><path d="M880 200 Q850 350 880 500"/><path d="M1050 420 Q1080 520 1130 560"/><path d="M1250 430 Q1300 500 1330 560"/></g>
<g stroke="#6e6e6e" stroke-width="3.4"><path d="M240 70 Q210 150 205 280 Q210 400 230 450 Q260 480 330 480 Q450 470 600 360"/><path d="M720 0 Q720 100 680 200 Q600 340 490 420 Q400 470 300 480"/><path d="M1080 800 Q1030 950 940 1140"/><path d="M1380 900 Q1350 1000 1340 1140"/><path d="M1020 0 Q1120 10 1200 0"/><ellipse cx="1237" cy="118" rx="20" ry="32" transform="rotate(0 1237 118)"/></g>
<g stroke="#8c8c8c" stroke-width="2.4" opacity="0.6" transform="translate(3 3)"><path d="M240 70 Q210 150 205 280 Q210 400 230 450 Q260 480 330 480 Q450 470 600 360"/><path d="M720 0 Q720 100 680 200 Q600 340 490 420 Q400 470 300 480"/><path d="M1080 800 Q1030 950 940 1140"/><path d="M1380 900 Q1350 1000 1340 1140"/><path d="M1020 0 Q1120 10 1200 0"/><ellipse cx="1237" cy="118" rx="20" ry="32" transform="rotate(0 1237 118)"/></g>
</g>
<g transform="translate(673 610) scale(0.42105)">
<g stroke="#a4bccd" stroke-width="2.6"><path d="M90 0 Q100 200 150 400 Q200 500 240 580"/><path d="M250 0 Q300 200 330 350"/><path d="M260 0 Q290 150 340 300 Q370 400 380 460"/><path d="M520 0 Q540 200 550 500 Q560 800 520 1140"/><path d="M560 150 Q580 450 590 700 Q600 900 550 1140"/><path d="M520 150 Q540 400 560 600"/><path d="M140 0 Q150 150 260 200 Q370 200 370 80"/><path d="M200 50 Q230 180 330 190"/><path d="M480 0 Q550 50 620 0"/><path d="M490 190 Q580 150 640 0"/><path d="M0 380 Q100 330 200 350"/><path d="M0 800 Q50 650 100 560"/><path d="M0 880 Q30 800 60 700"/><path d="M0 40 Q100 120 130 280 Q160 400 200 460"/><ellipse cx="310" cy="610" rx="140" ry="160" transform="rotate(0 310 610)"/><ellipse cx="320" cy="600" rx="110" ry="150" transform="rotate(0 320 600)"/><ellipse cx="290" cy="600" rx="120" ry="170" transform="rotate(0 290 600)"/><ellipse cx="230" cy="60" rx="200" ry="230" transform="rotate(0 230 60)"/><ellipse cx="260" cy="40" rx="160" ry="200" transform="rotate(0 260 40)"/><ellipse cx="200" cy="90" rx="140" ry="170" transform="rotate(0 200 90)"/></g>
<g stroke="#a4bccd" stroke-width="2.2" opacity="0.6" transform="translate(4 -3)"><path d="M90 0 Q100 200 150 400 Q200 500 240 580"/><path d="M250 0 Q300 200 330 350"/><path d="M260 0 Q290 150 340 300 Q370 400 380 460"/><path d="M520 0 Q540 200 550 500 Q560 800 520 1140"/><path d="M560 150 Q580 450 590 700 Q600 900 550 1140"/><path d="M520 150 Q540 400 560 600"/><path d="M140 0 Q150 150 260 200 Q370 200 370 80"/><path d="M200 50 Q230 180 330 190"/><path d="M480 0 Q550 50 620 0"/><path d="M490 190 Q580 150 640 0"/><path d="M0 380 Q100 330 200 350"/><path d="M0 800 Q50 650 100 560"/><path d="M0 880 Q30 800 60 700"/><path d="M0 40 Q100 120 130 280 Q160 400 200 460"/><ellipse cx="310" cy="610" rx="140" ry="160" transform="rotate(0 310 610)"/><ellipse cx="320" cy="600" rx="110" ry="150" transform="rotate(0 320 600)"/><ellipse cx="290" cy="600" rx="120" ry="170" transform="rotate(0 290 600)"/><ellipse cx="230" cy="60" rx="200" ry="230" transform="rotate(0 230 60)"/><ellipse cx="260" cy="40" rx="160" ry="200" transform="rotate(0 260 40)"/><ellipse cx="200" cy="90" rx="140" ry="170" transform="rotate(0 200 90)"/></g>
<g stroke="#8c8c8c" stroke-width="2.8"><path d="M400 140 Q520 90 650 80"/><path d="M660 0 Q750 120 790 250 Q810 350 790 450"/><path d="M300 0 Q320 100 360 220 Q400 300 420 360 Q400 440 340 470 L380 450 L385 505"/><path d="M200 540 L210 500"/><path d="M370 230 Q500 270 720 300"/><path d="M400 240 Q600 300 800 420"/><path d="M750 340 Q790 360 790 420"/><path d="M480 600 Q520 650 570 700"/><path d="M475 680 L480 760"/><path d="M0 840 Q150 860 300 830 Q450 810 560 760"/><path d="M270 880 Q400 900 550 820"/><path d="M280 900 Q420 920 560 840"/><path d="M210 940 Q320 990 500 960 Q580 940 620 900"/><path d="M250 1030 Q350 1060 560 1020"/><path d="M630 880 Q640 1000 630 1140"/><path d="M0 400 Q100 390 150 380"/><path d="M150 490 L155 820"/><path d="M80 620 Q100 720 90 810"/><path d="M0 130 Q50 150 90 180"/><path d="M0 370 Q80 400 160 420"/></g>
<g stroke="#8c8c8c" stroke-width="2.2" opacity="0.55" transform="translate(-3 3)"><path d="M400 140 Q520 90 650 80"/><path d="M660 0 Q750 120 790 250 Q810 350 790 450"/><path d="M300 0 Q320 100 360 220 Q400 300 420 360 Q400 440 340 470 L380 450 L385 505"/><path d="M200 540 L210 500"/><path d="M370 230 Q500 270 720 300"/><path d="M400 240 Q600 300 800 420"/><path d="M750 340 Q790 360 790 420"/><path d="M480 600 Q520 650 570 700"/><path d="M475 680 L480 760"/><path d="M0 840 Q150 860 300 830 Q450 810 560 760"/><path d="M270 880 Q400 900 550 820"/><path d="M280 900 Q420 920 560 840"/><path d="M210 940 Q320 990 500 960 Q580 940 620 900"/><path d="M250 1030 Q350 1060 560 1020"/><path d="M630 880 Q640 1000 630 1140"/><path d="M0 400 Q100 390 150 380"/><path d="M150 490 L155 820"/><path d="M80 620 Q100 720 90 810"/><path d="M0 130 Q50 150 90 180"/><path d="M0 370 Q80 400 160 420"/></g>
<g stroke="#6e6e6e" stroke-width="3.4"><path d="M630 0 Q720 80 780 200 Q810 300 800 400 Q780 500 700 600 Q600 690 500 720 Q400 760 250 790 Q100 810 0 820"/><path d="M205 510 Q210 550 260 570 Q340 570 385 505"/><path d="M240 820 Q250 1000 260 1140"/><path d="M600 700 Q610 900 620 1140"/></g>
<g stroke="#8c8c8c" stroke-width="2.4" opacity="0.6" transform="translate(3 3)"><path d="M630 0 Q720 80 780 200 Q810 300 800 400 Q780 500 700 600 Q600 690 500 720 Q400 760 250 790 Q100 810 0 820"/><path d="M205 510 Q210 550 260 570 Q340 570 385 505"/><path d="M240 820 Q250 1000 260 1140"/><path d="M600 700 Q610 900 620 1140"/></g>
</g>
</g>
<g fill="none" stroke-linecap="round">
<g stroke="#a4bccd" stroke-width="1.1">
<path d="M380 530 C340 330 420 240 545 235 C680 232 740 330 735 520"/>
<path d="M400 560 C360 360 440 255 550 250 C690 250 760 350 722 505"/>
<path d="M365 470 C380 330 480 250 600 245"/>
<path d="M150 880 Q200 700 330 430"/>
<path d="M120 830 Q160 650 300 460"/>
<path d="M200 900 Q330 880 430 760"/>
<path d="M430 880 Q520 1000 640 1000"/>
<path d="M700 960 Q800 1000 900 960"/>
<path d="M820 600 Q900 640 930 760"/>
</g><g stroke="#909090" stroke-width="1.1">
<path d="M545 250 Q520 330 530 420"/>
<path d="M600 262 Q640 320 662 420"/>
<path d="M470 282 Q432 360 440 470"/>
<path d="M652 252 Q722 330 742 450"/>
<path d="M420 330 Q395 420 405 520"/>
<path d="M700 300 Q760 380 770 470"/>
<path d="M330 300 Q300 380 290 470"/>
<path d="M470 940 Q600 960 720 950"/>
<path d="M760 930 Q880 930 980 900"/>
</g></g>
<circle cx="569" cy="419" r="2.5" fill="none" stroke="#333" stroke-width="1"/>
</svg>
<!-- REF 2: CSP screenshot -->
<div class="a" style="left:1277px;top:689px;width:357px;height:399px;background:#2d2d2d;overflow:hidden">
 <div class="t" style="left:179px;top:5px;font-size:9.5px;color:#9a9a9a;letter-spacing:-0.3px">Bunny Girl (8.00 x 10.00in 350dpi 25.3%)&nbsp; - C</div>
 <div class="a" style="left:4px;top:19px;width:353px;height:19px;background:#404040"></div>
 <div class="t" style="left:16px;top:23px;font-size:10px;color:#dcdcdc">File</div>
 <div class="t" style="left:51px;top:23px;font-size:10px;color:#dcdcdc">Edit</div>
 <div class="t" style="left:84px;top:23px;font-size:10px;color:#dcdcdc">Story(P)</div>
 <div class="t" style="left:130px;top:23px;font-size:10px;color:#dcdcdc">Animation</div>
 <div class="t" style="left:192px;top:23px;font-size:10px;color:#dcdcdc">Layer</div>
 <div class="t" style="left:231px;top:23px;font-size:10px;color:#dcdcdc">Select</div>
 <div class="t" style="left:272px;top:23px;font-size:10px;color:#dcdcdc">View</div>
 <div class="t" style="left:307px;top:23px;font-size:10px;color:#dcdcdc">Filter</div>
 <div class="t" style="left:343px;top:23px;font-size:10px;color:#dcdcdc">Wi</div>
 <div class="a" style="left:49px;top:39px;width:308px;height:19px;background:#3a3a3a"></div>
 <div class="t" style="left:6px;top:42px;font-size:11px;color:#6a6a6a;letter-spacing:-1px">&#187; &#187; &#187; &#187;</div>
 <svg style="left:49px;top:39px" width="308" height="19" viewBox="0 0 308 19">
  <g fill="none" stroke="#bdbdbd" stroke-width="1">
   <rect x="2.5" y="2.5" width="14" height="14" rx="2"/><ellipse cx="9.5" cy="9.5" rx="5" ry="3.5"/><ellipse cx="9.5" cy="9.5" rx="2.5" ry="1.5"/>
   <path d="M20.5 1 V18"/>
  </g>
  <rect x="26" y="3" width="14" height="14" fill="#00b4f0"/>
  <path d="M28 16 L31 8 L36 4 L39 7 L34 12 Z" fill="none" stroke="#333" stroke-width="1"/>
  <g fill="none" stroke="#bdbdbd" stroke-width="1.1">
   <path d="M43 16 L46 8 L51 4 L54 7 L49 12 Z"/>
   <path d="M60 16 V4 H69 V13 M65 14 A3 3 0 1 0 71 14 A3 3 0 1 0 65 14 M68 12 V16 M66 14 H70"/>
   <path d="M76 7 V16 H90 V9 H83 L81 7 Z"/>
   <path d="M96 10 Q96 16 102 16 H108 V13 Q108 10 104 10 M101 2 V10 M99 8 L101 10 L103 8" stroke="#707070"/>
   <path d="M112 9 L114 11 L116 9" stroke="#9a9a9a"/>
   <path d="M120 1 V18" stroke="#555"/>
   <path d="M126 7 L129 4 V10 M129 7 H133 Q136 7 136 11 Q136 15 132 15 H127"/>
   <path d="M150 7 L147 4 V10 M147 7 H143 Q140 7 140 11 Q140 15 144 15 H149" stroke="#707070"/>
   <path d="M156 1 V18" stroke="#555"/>
   <circle cx="169" cy="10" r="5" stroke-dasharray="1.5 1.3" stroke-width="1.6"/>
   <rect x="184" y="4" width="10" height="10" stroke="#707070" stroke-dasharray="2 1"/>
   <path d="M203 4 H210 V10 M203 10 H210 V16 H216 V10"/>
   <path d="M222 10 L228 4 L234 10 L228 16 Z" fill="#bdbdbd"/>
   <rect x="242" y="5" width="10" height="10" stroke-dasharray="2 1"/>
   <path d="M260 1 V18" stroke="#555"/>
   <path d="M269 4 L281 16 M269 4 V16 H281" stroke="#555" stroke-dasharray="1.5 1"/>
  </g>
 </svg>
 <div class="a" style="left:49px;top:59px;width:308px;height:17px;background:#2d2d2d"></div>
 <div class="a" style="left:49px;top:59px;width:78px;height:17px;background:#3c3c3c"></div>
 <div class="t" style="left:52px;top:63px;font-size:9px;color:#8a8a8a">Illustration*</div>
 <div class="a" style="left:118px;top:66px;width:4px;height:4px;border-radius:50%;background:#d0d0d0"></div>
 <div class="a" style="left:128px;top:59px;width:79px;height:17px;background:#56627a"></div>
 <div class="t" style="left:130px;top:63px;font-size:9px;color:#c8c8c8">Bunny Girl</div>
 <svg style="left:194px;top:64px" width="8" height="8" viewBox="0 0 8 8"><path d="M1 1 L7 7 M7 1 L1 7" stroke="#ddd" stroke-width="1"/></svg>
 <div class="a" style="left:49px;top:76px;width:308px;height:323px;background:#fff"></div>
</div>

<svg style="left:0;top:0" width="1920" height="1140" viewBox="0 0 1920 1140"><defs><clipPath id="c1"><rect x="1305" y="130" width="329" height="547"/></clipPath><clipPath id="c2"><rect x="1326" y="765" width="308" height="323"/></clipPath></defs>
<g clip-path="url(#c1)"><g transform="translate(1305 130) scale(0.24125)" fill="none" stroke="#44506c" stroke-width="7.5" stroke-linecap="round">
<path d="M140 0 Q200 60 240 110"/>
<path d="M200 0 Q240 50 260 80"/>
<path d="M400 40 Q420 0 440 0"/>
<path d="M400 50 Q410 90 420 80"/>
<path d="M500 0 Q480 60 500 100 Q480 140 420 150 Q380 150 340 130"/>
<path d="M240 110 Q200 150 190 250 Q200 380 180 460 Q170 560 160 620 Q150 700 160 770 L270 760 Q260 690 290 600 L330 530"/>
<path d="M270 300 Q290 420 280 460 Q290 540 320 530"/>
<path d="M340 140 Q320 200 330 300 Q360 400 400 460 Q430 490 470 470 Q450 380 420 200 Q400 160 340 140"/>
<path d="M310 520 Q360 600 400 680 Q410 740 410 780 L530 780 Q500 740 490 700 Q470 600 460 480"/>
<path d="M180 630 Q220 640 260 630"/>
<path d="M340 640 Q400 640 460 630"/>
<path d="M140 660 Q135 700 140 740"/>
<path d="M710 20 Q660 100 680 240 Q700 320 760 370"/>
<path d="M740 20 Q790 150 840 280"/>
<path d="M810 0 Q850 150 860 260 Q870 200 850 60"/>
<path d="M850 60 Q940 200 930 310"/>
<path d="M850 0 Q950 50 980 200 Q990 280 960 300"/>
<path d="M760 370 Q710 420 710 500 Q730 560 760 600 Q800 660 900 690 Q1000 700 1070 650 Q1130 600 1150 520 Q1160 400 1100 320 Q1020 260 900 270 Q800 300 760 370"/>
<path d="M800 320 Q900 260 1000 270 Q1120 300 1150 420"/>
<path d="M760 600 Q740 640 780 670 Q800 680 810 660"/>
<path d="M1080 520 Q1130 490 1150 540 Q1140 600 1090 610"/>
<path d="M920 640 Q950 620 970 660 Q960 690 930 680"/>
<path d="M990 700 Q1010 720 1030 690"/>
<path d="M880 740 Q930 790 980 880 Q970 950 990 990 L1130 990 Q1160 900 1160 840"/>
<path d="M1100 640 Q1200 700 1230 790 Q1280 900 1280 1140"/>
<path d="M870 730 Q920 800 960 880 Q970 1000 980 1140"/>
<path d="M1090 880 Q1100 1000 1060 1140"/>
<path d="M1130 800 Q1160 860 1210 880 Q1230 860 1220 830"/>
<path d="M1000 800 Q990 860 1030 880"/>
<path d="M270 1000 L560 1060 L580 1100"/>
<path d="M270 1000 Q260 1060 270 1140"/>
<path d="M150 1080 Q130 1110 140 1140"/>
<path d="M260 1140 Q350 1070 500 1090 Q560 1100 600 1140"/>
<ellipse cx="840" cy="590" rx="18" ry="40"/>
<ellipse cx="975" cy="525" rx="18" ry="40"/>
<ellipse cx="1245" cy="650" rx="55" ry="55"/>
</g></g>
<g clip-path="url(#c1)"><g transform="translate(1305 400) scale(0.24552)" fill="none" stroke="#44506c" stroke-width="7.5" stroke-linecap="round">
<path d="M130 0 Q110 100 110 280 L200 270"/>
<path d="M300 0 Q400 -10 480 10 Q560 40 600 100"/>
<path d="M200 80 Q160 150 170 250 Q200 330 270 380 Q330 410 380 400 Q460 370 500 330 Q560 280 600 200 Q610 120 560 60 Q480 10 380 20 Q270 40 200 80"/>
<path d="M290 50 Q400 0 500 40"/>
<path d="M480 190 Q490 140 530 140 Q560 160 560 200 Q550 250 500 260"/>
<path d="M230 130 L260 300"/>
<path d="M270 220 Q350 200 430 180"/>
<path d="M210 290 Q240 310 260 350 Q280 380 320 390"/>
<path d="M340 320 Q360 340 370 320"/>
<path d="M360 400 Q330 450 340 510 Q360 570 400 590 Q450 600 490 560 Q540 520 560 450 Q560 400 530 380"/>
<path d="M400 380 Q420 420 440 450 Q460 490 450 520"/>
<path d="M540 350 Q580 420 600 500 Q610 580 590 640 Q570 800 530 900 Q450 1000 370 1070"/>
<path d="M370 590 Q340 680 330 800 Q320 880 330 900 L400 900"/>
<path d="M360 820 Q420 790 480 820 Q490 880 470 940 Q450 980 420 950 Q400 900 380 880"/>
<path d="M310 880 Q340 910 400 910"/>
<path d="M390 940 Q370 1000 360 1070 L470 1030"/>
<path d="M540 580 Q520 700 480 800"/>
<path d="M880 370 Q800 350 760 320 Q730 280 770 250 Q850 210 960 220 Q1030 230 1040 270 Q1030 320 1010 350"/>
<path d="M860 330 Q900 350 920 380"/>
<path d="M1010 350 Q1100 250 1230 160 Q1280 170 1270 260 Q1240 360 1150 400 Q1100 400 1060 370"/>
<path d="M830 430 Q770 520 770 600 Q780 700 850 750 Q950 790 1060 750 Q1150 700 1190 620 Q1220 500 1180 420 Q1100 360 980 370 Q880 380 830 430"/>
<path d="M850 400 Q950 350 1050 360 Q1150 380 1200 480 Q1220 560 1200 620"/>
<path d="M820 540 Q950 510 1100 580"/>
<path d="M920 440 Q900 600 900 890"/>
<path d="M840 640 H940"/>
<path d="M760 570 Q790 640 780 680 Q760 720 800 760"/>
<path d="M1080 700 Q1110 660 1150 670 Q1170 700 1140 740"/>
<path d="M800 740 Q850 730 880 770 Q870 820 840 840 Q800 850 790 800"/>
<path d="M910 770 Q960 720 1020 740 Q1040 770 1000 790 Q960 800 920 790"/>
<path d="M790 870 Q770 950 790 1000 Q810 1040 830 1060 L930 1060"/>
<path d="M830 850 Q900 880 1000 870 Q1080 850 1100 830"/>
<path d="M1100 840 Q1140 950 1130 1050 L960 1060"/>
<path d="M1040 900 Q1080 950 1070 1050"/>
<path d="M900 890 Q930 1000 940 1060"/>
<path d="M930 0 Q920 40 940 60 Q980 70 1030 50 L1030 0"/>
<path d="M1160 0 L1150 70 L1240 60 L1250 0"/>
<ellipse cx="390" cy="210" rx="15" ry="40"/>
<ellipse cx="280" cy="290" rx="15" ry="40"/>
<ellipse cx="605" cy="620" rx="50" ry="50"/>
<ellipse cx="855" cy="605" rx="18" ry="25"/>
<ellipse cx="995" cy="590" rx="20" ry="28"/>
<ellipse cx="1195" cy="945" rx="55" ry="70"/>
</g></g>
<g clip-path="url(#c2)"><g transform="translate(1326 765) scale(0.28523)" fill="none" stroke="#262626" stroke-width="5.5" stroke-linecap="round">
<path d="M400 510 Q500 460 600 400 Q650 360 690 320"/>
<path d="M310 520 Q330 500 390 500 Q420 510 430 530 Q420 560 400 560 L400 600 Q360 610 300 580"/>
<path d="M340 530 Q360 520 380 540 Q370 560 350 555"/>
<path d="M290 580 Q230 630 210 700 Q200 760 240 800 L270 790"/>
<path d="M250 640 Q330 620 390 640 Q420 700 420 760 Q420 850 440 900 Q450 960 470 990"/>
<path d="M240 800 Q250 900 290 990 Q320 1050 360 1080 Q430 1090 490 1060"/>
<path d="M520 630 Q600 610 680 600 Q720 580 780 580 Q840 600 900 620 Q960 640 1000 620"/>
<path d="M700 570 L780 610 L840 680 Q860 690 870 680 Q880 650 900 640"/>
<path d="M690 600 Q640 650 600 700 Q580 750 590 790"/>
<path d="M620 600 Q570 650 540 700"/>
<path d="M520 650 Q530 750 510 850 Q500 950 520 1130"/>
<path d="M420 760 Q470 740 520 700"/>
<path d="M980 590 Q1040 620 1087 680"/>
<path d="M880 700 Q920 760 930 850 Q920 920 870 970"/>
<path d="M980 900 Q1000 960 1087 990"/>
<path d="M570 790 Q680 800 790 820"/>
<path d="M580 820 Q700 840 790 870"/>
<path d="M550 930 Q700 960 860 1000"/>
<path d="M520 1080 Q650 1050 800 1030 Q900 1020 960 1030"/>
<path d="M520 1100 Q700 1080 900 1060"/>
<path d="M920 1020 Q980 980 1040 960 Q1087 950 1087 1000"/>
<path d="M900 1100 Q1000 1080 1087 1100"/>
<path d="M640 620 Q700 700 700 780 Q690 900 680 1130"/>
<path d="M460 850 Q450 900 470 990"/>
<path d="M330 730 Q360 740 390 730"/>
<path d="M320 940 Q350 930 390 920"/>
<path d="M600 720 Q650 700 700 680"/>
</g></g>
<g clip-path="url(#c2)"><g transform="translate(1476 790) scale(0.14035)" fill="none" stroke="#262626" stroke-width="9" stroke-linecap="round">
<path d="M0 290 Q150 270 300 290 Q360 295 400 280"/>
<path d="M0 330 Q150 320 250 330 Q350 335 420 320"/>
<path d="M0 730 Q150 620 330 480"/>
<path d="M420 230 Q430 140 450 100 Q500 100 550 160"/>
<path d="M400 290 Q320 400 310 550 Q310 650 340 730 Q380 790 430 810"/>
<path d="M480 220 Q600 150 800 130 Q950 130 1050 160 Q1100 200 1110 300"/>
<path d="M470 390 Q490 280 560 210"/>
<path d="M560 380 Q560 270 650 180"/>
<path d="M620 420 Q600 300 690 190"/>
<path d="M680 430 Q700 320 790 190"/>
<path d="M770 420 Q800 300 850 210"/>
<path d="M820 400 Q850 260 920 160"/>
<path d="M910 460 Q920 300 990 200"/>
<path d="M960 520 Q980 400 1030 280"/>
<path d="M520 460 Q500 350 540 260"/>
<path d="M660 440 Q740 420 880 470 L970 530"/>
<path d="M1000 200 Q1090 330 1080 550 Q1050 760 880 870 L960 880"/>
<path d="M1100 250 Q1120 500 1060 700 Q1000 820 930 880"/>
<path d="M1060 100 Q1120 120 1130 200"/>
<path d="M430 520 Q440 700 520 860 Q560 890 600 900"/>
<path d="M520 450 Q470 600 500 770"/>
<path d="M710 470 Q740 440 800 460 Q830 500 820 560 Q800 610 760 605 Q720 590 710 540 Z"/>
<path d="M740 480 Q720 540 750 590"/>
<path d="M510 470 Q540 430 580 440 Q600 480 580 540 Q560 580 530 560"/>
<path d="M810 500 Q850 520 860 560 L880 575"/>
<path d="M545 580 Q530 610 540 650"/>
<path d="M490 700 L530 710"/>
<path d="M560 715 L640 715"/>
<path d="M590 920 L580 990 L610 1030"/>
<path d="M330 970 Q420 950 480 1000 Q540 1000 600 990 Q700 990 920 1020"/>
<path d="M870 900 Q880 1000 920 1060"/>
<path d="M1000 860 Q1030 950 1050 1100"/>
<path d="M1100 700 Q1120 900 1100 1100"/>
<path d="M200 1100 Q300 1000 410 830"/>
</g></g>
<path d="M1559 917 L1590 917 L1586 921 L1561 925 Z" fill="#333" clip-path="url(#c2)"/>
</svg>
<!-- DOCKER TABS -->
<div class="a" style="left:1659px;top:91px;width:166px;height:33px;border:1px solid #565656;border-bottom:none;border-radius:4px 4px 0 0;background:#494949"></div>
<div class="a" style="left:1825px;top:93px;width:94px;height:30px;border:1px solid #565656;border-bottom:none;border-radius:4px 4px 0 0;background:#454545"></div>
<div class="t" style="left:1673px;top:102px;font-size:13.2px;color:#e0e0e0">Advanced Color Sele...</div>
<div class="t" style="left:1840px;top:103px;font-size:13.5px;color:#e0e0e0">Tool Opt...</div>


<!-- docker splitter dots -->
<svg style="left:1655px;top:590px" width="4" height="20" viewBox="0 0 4 20"><g fill="#8a8a8a"><rect x="1" y="1" width="1.2" height="1.2"/><rect x="1" y="4" width="1.2" height="1.2"/><rect x="1" y="7" width="1.2" height="1.2"/><rect x="1" y="10" width="1.2" height="1.2"/><rect x="1" y="13" width="1.2" height="1.2"/><rect x="1" y="16" width="1.2" height="1.2"/></g></svg>

<!-- ADVANCED COLOR SELECTOR -->
<svg style="left:1660px;top:125px" width="17" height="17" viewBox="0 0 17 17"><circle cx="8.5" cy="8.5" r="7.6" fill="none" stroke="#d8d8d8" stroke-width="1.1"/><rect x="4.5" y="8" width="8" height="4.5" fill="#d8d8d8"/><path d="M6.3 8 V6.5 A2.3 2.3 0 0 1 10.8 6.2" fill="none" stroke="#d8d8d8" stroke-width="1.2"/></svg>
<div class="t" style="left:1682px;top:127px;font-size:13.5px;color:#e0e0e0">Advanced Color Selector</div>
<svg style="left:1881px;top:126px" width="15" height="15" viewBox="0 0 15 15"><rect x="0.6" y="5.6" width="8.6" height="8.6" fill="none" stroke="#dcdcdc" stroke-width="1.2"/><path d="M5.2 5.6 V0.8 H14.2 V9.8 H9.2" fill="none" stroke="#dcdcdc" stroke-width="1.2"/></svg>
<svg style="left:1905px;top:128px" width="11" height="11" viewBox="0 0 11 11"><path d="M0.5 0.5 L10.5 10.5 M10.5 0.5 L0.5 10.5" stroke="#dcdcdc" stroke-width="1.3"/></svg>
<svg style="left:1665px;top:150px" width="21" height="21" viewBox="0 0 21 21"><rect x="0.6" y="0.6" width="19.4" height="19.4" fill="none" stroke="#d0d0d0" stroke-width="1.2"/><path d="M0.6 3 H20" stroke="#d0d0d0" stroke-width="1.2"/><path d="M4.5 6.5 V16 M8.5 7.5 H16 M8.5 11.5 H16 M8.5 15.5 H16" stroke="#d0d0d0" stroke-width="1.8"/></svg>
<!-- hue ring -->
<div class="a" style="left:1724px;top:145px;width:113px;height:113px;border-radius:50%;background:conic-gradient(from 30deg,#00ff00,#00ffff 60deg,#0000ff 120deg,#ff00ff 180deg,#ff0000 240deg,#ffff00 300deg,#00ff00 360deg);-webkit-mask:radial-gradient(circle,transparent 47px,#000 47.6px,#000 56px,transparent 56.6px);mask:radial-gradient(circle,transparent 47px,#000 47.6px,#000 56px,transparent 56.6px)"></div>
<svg style="left:1724px;top:145px" width="113" height="113" viewBox="0 0 113 113">
 <defs>
  <linearGradient id="tw" gradientUnits="userSpaceOnUse" x1="17" y1="80" x2="76" y2="45"><stop offset="0" stop-color="#ffffff"/><stop offset="1" stop-color="#ffffff" stop-opacity="0"/></linearGradient>
  <linearGradient id="tb" gradientUnits="userSpaceOnUse" x1="56.5" y1="10" x2="56.5" y2="80"><stop offset="0" stop-color="#000"/><stop offset="1" stop-color="#000" stop-opacity="0"/></linearGradient>
 </defs>
 <path d="M56.5 10 L97.5 80 L17 80 Z" fill="#1aa6ff"/>
 <path d="M56.5 10 L97.5 80 L17 80 Z" fill="url(#tw)"/>
 <path d="M56.5 10 L97.5 80 L17 80 Z" fill="url(#tb)"/>
 <circle cx="56.5" cy="10" r="3.5" fill="none" stroke="#ccc" stroke-width="1"/>
 <path d="M96 75 L105 80" stroke="#fff" stroke-width="1.6"/><path d="M95.5 77 L104.5 82" stroke="#333" stroke-width="0.8"/>
</svg>
<!-- history strip -->
<div class="a" style="left:1903px;top:145px;width:17px;height:113px;background:#3a3a3a"></div>
<svg style="left:1904px;top:146px" width="14" height="14" viewBox="0 0 14 14"><circle cx="7" cy="7" r="5.8" fill="none" stroke="#dcdcdc" stroke-width="1.5"/><path d="M3 3 L11 11" stroke="#dcdcdc" stroke-width="1.5"/></svg>
<div class="a" style="left:1903px;top:160px;width:17px;height:16px;background:#000"></div>
<div class="a" style="left:1903px;top:176px;width:17px;height:16px;background:#1f5f8f"></div>
<!-- sliders -->
<div class="a" style="left:1659px;top:260px;width:244px;height:10px;background:#000"></div>
<div class="a" style="left:1659px;top:271px;width:244px;height:10px;background:linear-gradient(90deg,#000 0,#000 127px,#0c0808 128px,#7a4040 244px)"></div>
<div class="a" style="left:1659px;top:282px;width:244px;height:10px;background:linear-gradient(90deg,#000 0,#000 127px,#0c0c0c 128px,#8a8a8a 244px)"></div>
<div class="a" style="left:1659px;top:270px;width:244px;height:1px;background:#5a5a5a"></div>
<div class="a" style="left:1659px;top:281px;width:244px;height:1px;background:#5a5a5a"></div>
<div class="a" style="left:1776px;top:259px;width:11px;height:34px;border-left:2px solid #a0a0a0;border-right:2px solid #a0a0a0"></div><div class="a" style="left:1776px;top:270px;width:11px;height:1px;background:#a0a0a0"></div><div class="a" style="left:1776px;top:281px;width:11px;height:1px;background:#a0a0a0"></div>
<div class="a" style="left:1659px;top:294px;width:244px;height:16px;background:#3c3c3c"></div>
<svg style="left:1660px;top:296px" width="14" height="13" viewBox="0 0 14 13"><path d="M2 8 A5 5 0 0 1 10 2.5 M12 5 A5 5 0 0 1 4 10.5" fill="none" stroke="#d0d0d0" stroke-width="1.6"/><path d="M9 0 L12.5 2 L9.5 5 Z M5 13 L1.5 11 L4.5 8 Z" fill="#d0d0d0"/></svg>
<g></g>
<svg style="left:1782px;top:314px" width="19" height="3" viewBox="0 0 19 3"><g fill="#9a9a9a"><rect x="0" y="0.5" width="1.5" height="1.5"/><rect x="3" y="0.5" width="1.5" height="1.5"/><rect x="6" y="0.5" width="1.5" height="1.5"/><rect x="9" y="0.5" width="1.5" height="1.5"/><rect x="12" y="0.5" width="1.5" height="1.5"/><rect x="15" y="0.5" width="1.5" height="1.5"/></g></svg>

<!-- LAYERS -->
<svg style="left:1660px;top:320px" width="17" height="17" viewBox="0 0 17 17"><circle cx="8.5" cy="8.5" r="7.6" fill="none" stroke="#d8d8d8" stroke-width="1.1"/><rect x="4.5" y="8" width="8" height="4.5" fill="#d8d8d8"/><path d="M6.3 8 V6.5 A2.3 2.3 0 0 1 10.8 6.2" fill="none" stroke="#d8d8d8" stroke-width="1.2"/></svg>
<div class="t" style="left:1682px;top:322px;font-size:13px;color:#e0e0e0">Layers</div>
<svg style="left:1881px;top:321px" width="15" height="15" viewBox="0 0 15 15"><rect x="0.6" y="5.6" width="8.6" height="8.6" fill="none" stroke="#dcdcdc" stroke-width="1.2"/><path d="M5.2 5.6 V0.8 H14.2 V9.8 H9.2" fill="none" stroke="#dcdcdc" stroke-width="1.2"/></svg>
<svg style="left:1905px;top:323px" width="11" height="11" viewBox="0 0 11 11"><path d="M0.5 0.5 L10.5 10.5 M10.5 0.5 L0.5 10.5" stroke="#dcdcdc" stroke-width="1.3"/></svg>
<div class="a" style="left:1660px;top:340px;width:225px;height:30px;border-radius:3px;background:#434343;border:1px solid #333"></div>
<div class="t" style="left:1664px;top:349px;font-size:14px;color:#e6e6e6">Normal</div>
<svg style="left:1866px;top:353px" width="10" height="6" viewBox="0 0 10 6"><path d="M0 0 H10 L5 6 Z" fill="#9a9a9a"/></svg>
<svg style="left:1896px;top:345px" width="21" height="23" viewBox="0 0 21 23"><path d="M0.7 1 H14.5 L9.5 9 V18 L5.8 16 V9 Z" fill="none" stroke="#dcdcdc" stroke-width="1.3"/><path d="M12 18 H19 L15.5 22 Z" fill="#9a9a9a"/></svg>
<div class="a" style="left:1660px;top:374px;width:225px;height:28px;border-radius:3px;background:#363636;border:1px solid #2e2e2e;overflow:hidden"><div style="position:absolute;left:0;top:0;width:208px;height:28px;background:#52708f"></div></div>
<svg style="left:1870px;top:378px" width="12" height="20" viewBox="0 0 12 20"><path d="M1.5 7 L6 2.5 L10.5 7 Z M1.5 13 L6 17.5 L10.5 13 Z" fill="#8a8a8a"/></svg>
<div class="t" style="left:1717px;top:381px;font-size:14px;color:#ececec">Opacity:&nbsp; 100%</div>
<svg style="left:1896px;top:382px" width="21" height="18" viewBox="0 0 21 18"><path d="M1 1.5 H13 M1 5.5 H13 M1 9.5 H13" stroke="#e0e0e0" stroke-width="1.5"/><path d="M12 12 H19 L15.5 16 Z" fill="#9a9a9a"/></svg>
<!-- layer list -->
<div class="a" style="left:1659px;top:405px;width:261px;height:269px;background:#393939"></div>
<div class="a" style="left:1704px;top:406px;width:214px;height:26px;background:#52708f"></div>
<div class="a" style="left:1659px;top:432px;width:261px;height:1px;background:#353535"></div>
<div class="a" style="left:1659px;top:459px;width:261px;height:1px;background:#353535"></div>
<div class="a" style="left:1659px;top:486px;width:261px;height:1px;background:#353535"></div>
<svg style="left:1659px;top:405px" width="261" height="84" viewBox="0 0 261 84">
 <g id="eye"><path d="M5 15 Q12 6 19 15 Q12 23 5 15 Z" fill="none" stroke="#d8d8d8" stroke-width="1.2"/><circle cx="12" cy="14" r="3.6" fill="#e0e0e0"/></g>
 <use href="#eye" y="27"/><use href="#eye" y="54"/>
 <rect x="27" y="9" width="14" height="14" fill="#2e2e2e"/><rect x="27" y="36" width="14" height="14" fill="#2e2e2e"/><rect x="27" y="63" width="14" height="14" fill="#2e2e2e"/>
 <path d="M30 16 L33 20 L38 11" fill="none" stroke="#e0e0e0" stroke-width="1.6"/>
 <rect x="50" y="5" width="18" height="21" fill="#f4f4f4" stroke="#222" stroke-width="0.8"/>
 <rect x="49" y="32" width="20" height="21" fill="#f0f0f0"/>
 <rect x="51" y="60" width="16" height="21" fill="#fff"/>
 <g fill="#ddd" opacity="0.9"><rect x="50" y="5" width="4.5" height="4.5"/><rect x="59" y="5" width="4.5" height="4.5"/><rect x="54.5" y="9.5" width="4.5" height="4.5"/><rect x="63.5" y="9.5" width="4.5" height="4.5"/><rect x="50" y="14" width="4.5" height="4.5"/><rect x="59" y="14" width="4.5" height="4.5"/><rect x="54.5" y="18.5" width="4.5" height="4.5"/><rect x="63.5" y="18.5" width="4.5" height="4.5"/>
 <rect x="49" y="32" width="5" height="5"/><rect x="59" y="32" width="5" height="5"/><rect x="54" y="37" width="5" height="5"/><rect x="64" y="37" width="5" height="5"/><rect x="49" y="42" width="5" height="5"/><rect x="59" y="42" width="5" height="5"/><rect x="54" y="47" width="5" height="5"/><rect x="64" y="47" width="5" height="5"/></g>
 <g fill="none" stroke="#e0e0e0" stroke-width="1.1"><path d="M76 5 L81 10 M78 10 H81 V7 M80 3 H84 V9 H82"/><path d="M76 32 L81 37 M78 37 H81 V34 M80 30 H84 V36 H82"/><path d="M76 59 L81 64 M78 64 H81 V61 M80 57 H84 V63 H82"/></g>
 <g fill="#b0b8c0" opacity="0.55"><path d="M205 13.5 H217 V21 H205 Z"/><path d="M210 7 Q213.5 8.5 213.5 13" fill="none" stroke="#b0b8c0" stroke-width="1.6"/></g>
 <g fill="#727272"><path d="M205 40.5 H217 V48 H205 Z"/><path d="M210 34 Q213.5 35.5 213.5 40" fill="none" stroke="#727272" stroke-width="1.6"/></g>
 <g fill="#d4d4d4"><path d="M205 67.5 H217 V75 H205 Z"/><path d="M207 67.5 V65 A4 4 0 0 1 215 65 V67.5" fill="none" stroke="#d4d4d4" stroke-width="1.8"/></g>
 <g font-family="Liberation Sans" font-style="italic" font-size="19" fill="#7c7c7c"><text x="221" y="21">α</text><text x="221" y="48">α</text><text x="221" y="75">α</text></g>
 <g><rect x="241" y="7" width="15" height="15" fill="#6a8098"/><rect x="241" y="34" width="15" height="15" fill="#4e4e4e"/><rect x="241" y="61" width="15" height="15" fill="#4e4e4e"/>
 <g fill="#8ea4ba"><rect x="246" y="7" width="5" height="5"/><rect x="241" y="12" width="5" height="5"/><rect x="251" y="12" width="5" height="5"/><rect x="246" y="17" width="5" height="5"/></g>
 <g fill="#7a7a7a"><rect x="246" y="34" width="5" height="5"/><rect x="241" y="39" width="5" height="5"/><rect x="251" y="39" width="5" height="5"/><rect x="246" y="44" width="5" height="5"/><rect x="246" y="61" width="5" height="5"/><rect x="241" y="66" width="5" height="5"/><rect x="251" y="66" width="5" height="5"/><rect x="246" y="71" width="5" height="5"/></g></g>
</svg>
<div class="t" style="left:1749px;top:413px;font-size:14px;font-weight:bold;color:#e8e8e8">Paint Layer 2</div>
<div class="t" style="left:1749px;top:440px;font-size:13.5px;color:#e0e0e0">Paint Layer 1</div>
<div class="t" style="left:1749px;top:467px;font-size:13.7px;color:#e0e0e0">Background</div>
<!-- layer buttons -->
<svg style="left:1664px;top:679px" width="250" height="22" viewBox="0 0 250 22">
 <g stroke="#e0e0e0" fill="none">
  <path d="M10 1 V19 M1 10 H19" stroke-width="1.8"/>
  <path d="M47 5 V19 H60 M51 1 H65 V15 H51 Z" stroke-width="1.4"/>
  <path d="M79 5 L88.5 14 L98 5" stroke-width="1.8"/>
  <path d="M111 16 L120.5 6 L130 16" stroke-width="1.8"/>
  <path d="M143 5 H163 M143 10 H163 M143 15 H163" stroke-width="1.6"/>
 </g>
 <g fill="#e0e0e0"><circle cx="158" cy="5" r="1.7"/><circle cx="148" cy="10" r="1.7"/><circle cx="153" cy="15" r="1.7"/>
 <path d="M231 3 H249 V5 H231 Z M236 3 V1 H244 V3 M232.5 7 H247.5 V19 Q247.5 21 245.5 21 H234.5 Q232.5 21 232.5 19 Z"/></g>
 <g fill="#9a9a9a"><path d="M28 9 H37 L32.5 13 Z M171 9 H180 L175.5 13 Z"/></g>
</svg>
<svg style="left:1782px;top:708px" width="19" height="3" viewBox="0 0 19 3"><g fill="#9a9a9a"><rect x="0" y="0.5" width="1.5" height="1.5"/><rect x="3" y="0.5" width="1.5" height="1.5"/><rect x="6" y="0.5" width="1.5" height="1.5"/><rect x="9" y="0.5" width="1.5" height="1.5"/><rect x="12" y="0.5" width="1.5" height="1.5"/><rect x="15" y="0.5" width="1.5" height="1.5"/></g></svg>

<!-- BRUSH PRESETS -->
<svg style="left:1660px;top:713px" width="17" height="17" viewBox="0 0 17 17"><circle cx="8.5" cy="8.5" r="7.6" fill="none" stroke="#d8d8d8" stroke-width="1.1"/><rect x="4.5" y="8" width="8" height="4.5" fill="#d8d8d8"/><path d="M6.3 8 V6.5 A2.3 2.3 0 0 1 10.8 6.2" fill="none" stroke="#d8d8d8" stroke-width="1.2"/></svg>
<div class="t" style="left:1682px;top:715px;font-size:13.3px;color:#e0e0e0">Brush Presets</div>
<svg style="left:1881px;top:714px" width="15" height="15" viewBox="0 0 15 15"><rect x="0.6" y="5.6" width="8.6" height="8.6" fill="none" stroke="#dcdcdc" stroke-width="1.2"/><path d="M5.2 5.6 V0.8 H14.2 V9.8 H9.2" fill="none" stroke="#dcdcdc" stroke-width="1.2"/></svg>
<svg style="left:1905px;top:716px" width="11" height="11" viewBox="0 0 11 11"><path d="M0.5 0.5 L10.5 10.5 M10.5 0.5 L0.5 10.5" stroke="#dcdcdc" stroke-width="1.3"/></svg>
<div class="a" style="left:1660px;top:733px;width:142px;height:25px;border-radius:3px;background:#434343;border:1px solid #333"></div>
<div class="t" style="left:1664px;top:740px;font-size:14px;color:#e6e6e6">All</div>
<svg style="left:1784px;top:744px" width="10" height="6" viewBox="0 0 10 6"><path d="M0 0 H10 L5 6 Z" fill="#9a9a9a"/></svg>
<div class="a" style="left:1804px;top:733px;width:58px;height:25px;border-radius:3px;background:#434343;border:1px solid #333"></div>
<svg style="left:1810px;top:736px" width="13" height="20" viewBox="0 0 13 20"><path d="M1 1 H12 V19 L6.5 13.5 L1 19 Z" fill="none" stroke="#dcdcdc" stroke-width="1.5"/></svg>
<div class="t" style="left:1828px;top:740px;font-size:14px;color:#e6e6e6">Tag</div>
<svg style="left:1852px;top:750px" width="9" height="5" viewBox="0 0 9 5"><path d="M0 0 H9 L4.5 5 Z" fill="#9a9a9a"/></svg>
<svg style="left:1869px;top:738px" width="17" height="14" viewBox="0 0 17 14"><path d="M0.5 1.5 H16 M0.5 6.5 H16 M0.5 11.5 H16" stroke="#e0e0e0" stroke-width="1.8"/></svg>
<svg style="left:1895px;top:735px" width="21" height="21" viewBox="0 0 21 21"><rect x="0.6" y="0.6" width="19.4" height="19.4" fill="none" stroke="#e0e0e0" stroke-width="1.2"/><path d="M10 2 L11 4 L9.5 6 L11 8 L9.5 10" fill="none" stroke="#e0e0e0" stroke-width="0.8"/></svg>
<!-- preset scrollbar -->
<div class="a" style="left:1901px;top:761px;width:17px;height:316px;background:#3c3c3c"></div>
<div class="a" style="left:1902px;top:761px;width:15px;height:15px;border:1px solid #555;background:#474747"></div>
<svg style="left:1905px;top:765px" width="9" height="5" viewBox="0 0 9 5"><path d="M0 5 L4.5 0 L9 5 Z" fill="#9a9a9a"/></svg>
<div class="a" style="left:1902px;top:785px;width:15px;height:40px;border:1px solid #555;background:#474747"></div>
<div class="a" style="left:1902px;top:1060px;width:15px;height:15px;border:1px solid #555;background:#474747"></div>
<svg style="left:1905px;top:1065px" width="9" height="5" viewBox="0 0 9 5"><path d="M0 0 L4.5 5 L9 0 Z" fill="#9a9a9a"/></svg>
<!-- search -->
<div class="a" style="left:1659px;top:1078px;width:155px;height:26px;border-radius:3px;background:#3a3a3a"></div>
<div class="t" style="left:1662px;top:1085px;font-size:13px;color:#8e8e8e">Search</div>
<div class="a" style="left:1821px;top:1082px;width:17px;height:17px;background:#363636"></div>
<svg style="left:1823px;top:1085px" width="13" height="12" viewBox="0 0 13 12"><path d="M1 6 L5 11 L12 0.5" fill="none" stroke="#d8d8d8" stroke-width="1.6"/></svg>
<div class="t" style="left:1845px;top:1085px;font-size:13.2px;color:#e0e0e0">Filter in Tag</div>

<div class="a" style="left:1659px;top:761px;width:242px;height:316px;background:#3a3a3a;overflow:hidden">
<svg style="left:0;top:0" width="242" height="316" viewBox="1659 761 242 316">
<defs><linearGradient id="pgtop" x1="0" x2="1"><stop offset="0" stop-color="#3a3a3a"/><stop offset="0.5" stop-color="#444"/><stop offset="0.8" stop-color="#ccc"/><stop offset="1" stop-color="#d4d4d4"/></linearGradient><clipPath id="cellc"><rect x="0" y="0" width="58" height="58"/></clipPath></defs>
<rect x="1661" y="761" width="58" height="6" fill="#d4d4d4"/>
<rect x="1721" y="761" width="58" height="6" fill="#d4d4d4"/>
<rect x="1781" y="761" width="58" height="6" fill="#d4d4d4"/>
<rect x="1841" y="761" width="58" height="6" fill="url(#pgtop)"/>
<rect x="1661" y="1068" width="58" height="9" fill="#d4d4d4"/>
<path d="M1705 1077 L1719 1068 L1719 1077 Z" fill="#e07020"/>
<rect x="1721" y="1068" width="58" height="9" fill="#d4d4d4"/>
<path d="M1765 1077 L1779 1068 L1779 1077 Z" fill="#b89870"/>
<rect x="1781" y="1068" width="58" height="9" fill="#d4d4d4"/>
<path d="M1825 1077 L1839 1068 L1839 1077 Z" fill="#4070c0"/>
<rect x="1841" y="1068" width="58" height="9" fill="#d4d4d4"/>
<path d="M1885 1077 L1899 1068 L1899 1077 Z" fill="#d07090"/>
<rect x="1661" y="768" width="58" height="58" fill="#d4d4d4"/>
<g transform="translate(1661 768)" clip-path="url(#cellc)"><path d="M16 50 Q30 50 58 40" stroke="#222" stroke-width="5.5" fill="none" stroke-linecap="round"/><path d="M28.9 24.1 L75.2 -23.0 L82.0 -16.2 L34.9 30.1 Z" fill="#2a2a2a"/><path d="M27.2 26.7 L28.9 24.1 L34.9 30.1 L32.3 31.8 Z" fill="#666"/><path d="M22 37 L27.2 26.7 L32.3 31.8 Z" fill="#d0d0d0"/><path d="M46.6 10.7 L55.1 2.2 L56.8 3.9 L48.3 12.4 Z" fill="#777" opacity="0.6"/></g>
<rect x="1721" y="768" width="58" height="58" fill="#d4d4d4"/>
<g transform="translate(1721 768)" clip-path="url(#cellc)"><path d="M18 44 Q24 54 58 42" stroke="#333" stroke-width="4" fill="none" opacity="0.8"/><path d="M28.9 24.1 L75.2 -23.0 L82.0 -16.2 L34.9 30.1 Z" fill="#1e1e1e"/><path d="M27.2 26.7 L28.9 24.1 L34.9 30.1 L32.3 31.8 Z" fill="#444"/><path d="M22 37 L27.2 26.7 L32.3 31.8 Z" fill="#2a2a2a"/><path d="M46.6 10.7 L55.1 2.2 L56.8 3.9 L48.3 12.4 Z" fill="#777" opacity="0.6"/></g>
<rect x="1781" y="768" width="58" height="58" fill="#d4d4d4"/>
<g transform="translate(1781 768)" clip-path="url(#cellc)"><path d="M15 48 Q26 56 40 48 T58 46" stroke="#555" stroke-width="6" fill="none" opacity="0.5"/><path d="M28.9 24.1 L75.2 -23.0 L82.0 -16.2 L34.9 30.1 Z" fill="#e8e8e8"/><path d="M27.2 26.7 L28.9 24.1 L34.9 30.1 L32.3 31.8 Z" fill="#c87030"/><path d="M22 37 L27.2 26.7 L32.3 31.8 Z" fill="#eeeeee"/><path d="M46.6 10.7 L55.1 2.2 L56.8 3.9 L48.3 12.4 Z" fill="#777" opacity="0.6"/></g>
<rect x="1841" y="768" width="58" height="58" fill="#d4d4d4"/>
<g transform="translate(1841 768)" clip-path="url(#cellc)"><path d="M17 48 Q28 54 38 48 T58 48" stroke="#888" stroke-width="6" fill="none" opacity="0.45"/><path d="M28.9 24.1 L75.2 -23.0 L82.0 -16.2 L34.9 30.1 Z" fill="#8a8a8a"/><path d="M27.2 26.7 L28.9 24.1 L34.9 30.1 L32.3 31.8 Z" fill="#bbb"/><path d="M22 37 L27.2 26.7 L32.3 31.8 Z" fill="#d8d8d8"/><path d="M46.6 10.7 L55.1 2.2 L56.8 3.9 L48.3 12.4 Z" fill="#777" opacity="0.6"/></g>
<rect x="1661" y="828" width="58" height="58" fill="#d4d4d4"/>
<g transform="translate(1661 828)" clip-path="url(#cellc)"><path d="M18 40 Q20 48 27 44 Q33 40 34 48 Q36 54 58 40" stroke="#2a2a2a" stroke-width="3" fill="none"/><path d="M37.1 18.2 L76.3 -21.8 L80.8 -17.3 L40.8 21.9 Z" fill="#555"/><path d="M29.2 25.8 L37.0 18.0 L41.0 22.0 L33.2 29.8 Z" fill="#d8c8e8" stroke="#888" stroke-width="0.4"/><path d="M22 37 Q23.3 29.8 28.9 25.5 L33.5 30.1 Q29.2 35.7 22 37 Z" fill="#3a1e1e"/></g>
<rect x="1721" y="828" width="58" height="58" fill="#d4d4d4"/>
<g transform="translate(1721 828)" clip-path="url(#cellc)"><path d="M18 40 Q20 48 27 44 Q33 40 34 48 Q36 54 58 40" stroke="#555" stroke-width="2.6" fill="none" opacity="0.7"/><path d="M37.1 18.2 L76.3 -21.8 L80.8 -17.3 L40.8 21.9 Z" fill="#e09a20"/><path d="M29.2 25.8 L37.0 18.0 L41.0 22.0 L33.2 29.8 Z" fill="#d8c8e8" stroke="#888" stroke-width="0.4"/><path d="M22 37 Q23.3 29.8 28.9 25.5 L33.5 30.1 Q29.2 35.7 22 37 Z" fill="#5a3a30"/></g>
<rect x="1781" y="828" width="58" height="58" fill="#d4d4d4"/>
<g transform="translate(1781 828)" clip-path="url(#cellc)"><path d="M16 46 Q20 52 27 44 Q33 38 33 48 Q36 54 58 38" stroke="#333" stroke-width="1.1" fill="none"/><path d="M37.1 18.2 L76.3 -21.8 L80.8 -17.3 L40.8 21.9 Z" fill="#e88a20"/><path d="M29.2 25.8 L37.0 18.0 L41.0 22.0 L33.2 29.8 Z" fill="#d8c8e8" stroke="#888" stroke-width="0.4"/><path d="M22 37 Q24.2 30.7 29.6 26.3 L32.7 29.4 Q28.3 34.8 22 37 Z" fill="#5a3030"/></g>
<rect x="1841" y="828" width="58" height="58" fill="#d4d4d4"/>
<g transform="translate(1841 828)" clip-path="url(#cellc)"><path d="M15 40 Q25 50 58 35" stroke="#444" stroke-width="6" fill="none" opacity="0.4" stroke-dasharray="1.2 1"/><circle cx="17" cy="39" r="2.5" fill="#222"/><path d="M27.9 24.6 L75.3 -22.8 L81.8 -16.3 L34.4 31.1 Z" fill="#2a7ed0"/><path d="M49.2 7.7 L77.5 -20.6 L79.6 -18.5 L51.3 9.8 Z" fill="#fff" opacity="0.15"/><path d="M22 37 L27.9 24.6 L34.4 31.1 Z" fill="#d8b890"/><path d="M22 37 L23.8 33.2 L25.8 35.2 Z" fill="#222"/></g>
<rect x="1661" y="888" width="58" height="58" fill="#d4d4d4"/>
<g transform="translate(1661 888)" clip-path="url(#cellc)"><path d="M6 40 L30 44 L8 48 L40 46 L12 54 L50 48 L20 57 L58 46" stroke="#444" stroke-width="0.8" fill="none"/><path d="M27.9 24.6 L75.3 -22.8 L81.8 -16.3 L34.4 31.1 Z" fill="#3a88e0"/><path d="M49.2 7.7 L77.5 -20.6 L79.6 -18.5 L51.3 9.8 Z" fill="#fff" opacity="0.15"/><path d="M22 37 L27.9 24.6 L34.4 31.1 Z" fill="#e8d0a8"/><path d="M22 37 L23.8 33.2 L25.8 35.2 Z" fill="#222"/></g>
<rect x="1720" y="887" width="60" height="60" fill="#52708f"/>
<rect x="1724" y="891" width="52" height="52" fill="#86b6d6"/>
<g transform="translate(1721 888)" clip-path="url(#cellc)"><path d="M18 40 Q14 52 26 50 Q32 46 40 48 T58 44" stroke="#6a8aa0" stroke-width="0.8" fill="none"/><circle cx="16" cy="15" r="5" stroke="#6a90b0" stroke-width="0.6" fill="none"/><path d="M27.9 24.6 L75.3 -22.8 L81.8 -16.3 L34.4 31.1 Z" fill="#2e6ee8"/><path d="M49.2 7.7 L77.5 -20.6 L79.6 -18.5 L51.3 9.8 Z" fill="#fff" opacity="0.15"/><path d="M22 37 L27.9 24.6 L34.4 31.1 Z" fill="#a8d8d8"/><path d="M22 37 L23.8 33.2 L25.8 35.2 Z" fill="#222"/></g>
<rect x="1781" y="888" width="58" height="58" fill="#d4d4d4"/>
<g transform="translate(1781 888)" clip-path="url(#cellc)"><path d="M16 46 Q20 52 27 44 Q33 38 33 48 Q36 54 58 38" stroke="#222" stroke-width="1.1" fill="none"/><path d="M27.9 24.6 L75.3 -22.8 L81.8 -16.3 L34.4 31.1 Z" fill="#3a3a44"/><path d="M49.2 7.7 L77.5 -20.6 L79.6 -18.5 L51.3 9.8 Z" fill="#fff" opacity="0.15"/><path d="M22 37 L27.9 24.6 L34.4 31.1 Z" fill="#e8d8b0"/><path d="M22 37 L23.8 33.2 L25.8 35.2 Z" fill="#222"/><path d="M32.8 19.5 L34.9 17.4 L41.6 24.1 L39.5 26.2 Z" fill="#c02020"/></g>
<rect x="1841" y="888" width="58" height="58" fill="#d4d4d4"/>
<g transform="translate(1841 888)" clip-path="url(#cellc)"><path d="M20 40 Q14 54 30 53 Q45 52 58 45" stroke="#333" stroke-width="2" fill="none" stroke-dasharray="1 0.8"/><path d="M27.9 24.6 L75.3 -22.8 L81.8 -16.3 L34.4 31.1 Z" fill="#c8b0a0"/><path d="M49.2 7.7 L77.5 -20.6 L79.6 -18.5 L51.3 9.8 Z" fill="#fff" opacity="0.15"/><path d="M22 37 L27.9 24.6 L34.4 31.1 Z" fill="#e8dcc0"/><path d="M22 37 L23.8 33.2 L25.8 35.2 Z" fill="#222"/></g>
<rect x="1661" y="948" width="58" height="58" fill="#d4d4d4"/>
<g transform="translate(1661 948)" clip-path="url(#cellc)"><path d="M8 44 Q14 50 24 46 Q34 40 38 46 Q42 52 58 46" stroke="#666" stroke-width="1" fill="none"/><path d="M28.9 24.1 L75.2 -23.0 L82.0 -16.2 L34.9 30.1 Z" fill="#c8c8d0"/><path d="M27.2 26.7 L28.9 24.1 L34.9 30.1 L32.3 31.8 Z" fill="#888"/><path d="M22 37 L27.2 26.7 L32.3 31.8 Z" fill="#b0b0b0"/><path d="M46.6 10.7 L55.1 2.2 L56.8 3.9 L48.3 12.4 Z" fill="#777" opacity="0.6"/></g>
<rect x="1721" y="948" width="58" height="58" fill="#d4d4d4"/>
<g transform="translate(1721 948)" clip-path="url(#cellc)"><path d="M8 50 Q20 38 58 42" stroke="#555" stroke-width="3.5" fill="none" opacity="0.4"/><path d="M7 9 A4 4 0 1 1 13 10 M13 10 L11 13 M7 9 L8 6" stroke="#444" stroke-width="1.2" fill="none"/><path d="M27.9 24.6 L75.3 -22.8 L81.8 -16.3 L34.4 31.1 Z" fill="#e0c020"/><path d="M49.2 7.7 L77.5 -20.6 L79.6 -18.5 L51.3 9.8 Z" fill="#fff" opacity="0.15"/><path d="M22 37 L27.9 24.6 L34.4 31.1 Z" fill="#d8c8a0"/><path d="M22 37 L23.8 33.2 L25.8 35.2 Z" fill="#222"/></g>
<rect x="1781" y="948" width="58" height="58" fill="#d4d4d4"/>
<g transform="translate(1781 948)" clip-path="url(#cellc)"><path d="M8 42 Q30 30 58 44" stroke="#333" stroke-width="9" fill="none" opacity="0.4" stroke-dasharray="1 1"/><path d="M27.9 24.6 L75.3 -22.8 L81.8 -16.3 L34.4 31.1 Z" fill="#2a6a30"/><path d="M49.2 7.7 L77.5 -20.6 L79.6 -18.5 L51.3 9.8 Z" fill="#fff" opacity="0.15"/><path d="M22 37 L27.9 24.6 L34.4 31.1 Z" fill="#d8c8a0"/><path d="M22 37 L23.8 33.2 L25.8 35.2 Z" fill="#222"/><g transform="translate(-6 2)"><path d="M28.4 25.0 L75.7 -22.4 L81.4 -16.7 L34.0 30.6 Z" fill="#3a7a40"/><path d="M22 37 L28.4 25.0 L34.0 30.6 Z" fill="#d8c8a0"/></g></g>
<rect x="1841" y="948" width="58" height="58" fill="#d4d4d4"/>
<g transform="translate(1841 948)" clip-path="url(#cellc)"><path d="M4 44 L8 40 L10 46 L13 39 L16 46 L19 40 L22 46 L30 36 L36 46 L44 38 L52 48 M40 52 L58 44" stroke="#111" stroke-width="1.4" fill="none"/><path d="M31.8 21.3 L75.3 -22.8 L81.8 -16.3 L37.7 27.2 Z" fill="#3a7ad0"/><path d="M29.5 24.7 L31.8 21.3 L37.7 27.2 L34.3 29.5 Z" fill="#aaa"/><path d="M22 37 L29.5 24.7 L34.3 29.5 Z" fill="#c0c0c0"/><path d="M22 37 L28.4 30.6" stroke="#333" stroke-width="0.6"/></g>
<rect x="1661" y="1008" width="58" height="58" fill="#d4d4d4"/>
<g transform="translate(1661 1008)" clip-path="url(#cellc)"><path d="M10 46 Q12 50 15 44 Q17 50 20 46 Q22 40 24 48 Q27 44 30 46 Q33 42 36 47 Q40 44 44 46 Q48 43 58 46" stroke="#333" stroke-width="0.9" fill="none"/><path d="M28.9 24.1 L75.2 -23.0 L82.0 -16.2 L34.9 30.1 Z" fill="#505868"/><path d="M27.2 26.7 L28.9 24.1 L34.9 30.1 L32.3 31.8 Z" fill="#222"/><path d="M22 37 L27.2 26.7 L32.3 31.8 Z" fill="#333"/><path d="M46.6 10.7 L55.1 2.2 L56.8 3.9 L48.3 12.4 Z" fill="#777" opacity="0.6"/></g>
<rect x="1721" y="1008" width="58" height="58" fill="#d4d4d4"/>
<g transform="translate(1721 1008)" clip-path="url(#cellc)"><path d="M18 38 Q10 48 30 47 Q45 46 58 40" stroke="#000" stroke-width="1.6" fill="none"/><path d="M28.9 24.1 L75.2 -23.0 L82.0 -16.2 L34.9 30.1 Z" fill="#909090"/><path d="M27.2 26.7 L28.9 24.1 L34.9 30.1 L32.3 31.8 Z" fill="#3a8ad0"/><path d="M22 37 L27.2 26.7 L32.3 31.8 Z" fill="#b0b0b0"/><path d="M46.6 10.7 L55.1 2.2 L56.8 3.9 L48.3 12.4 Z" fill="#777" opacity="0.6"/></g>
<rect x="1781" y="1008" width="58" height="58" fill="#d4d4d4"/>
<g transform="translate(1781 1008)" clip-path="url(#cellc)"><path d="M10 46 L30 40 L26 50 Q45 48 58 38" stroke="#111" stroke-width="1.5" fill="none"/><path d="M31.8 21.3 L75.3 -22.8 L81.8 -16.3 L37.7 27.2 Z" fill="#e8d030"/><path d="M29.5 24.7 L31.8 21.3 L37.7 27.2 L34.3 29.5 Z" fill="#c0c0c0"/><path d="M22 37 L29.5 24.7 L34.3 29.5 Z" fill="#d0d0d0"/><path d="M22 37 L28.4 30.6" stroke="#333" stroke-width="0.6"/></g>
<rect x="1841" y="1008" width="58" height="58" fill="#d4d4d4"/>
<g transform="translate(1841 1008)" clip-path="url(#cellc)"><path d="M10 50 L14 45 Q22 44 28 40 L36 48 Q46 46 58 40" stroke="#111" stroke-width="1.8" fill="none"/><path d="M31.8 21.3 L75.3 -22.8 L81.8 -16.3 L37.7 27.2 Z" fill="#111"/><path d="M29.5 24.7 L31.8 21.3 L37.7 27.2 L34.3 29.5 Z" fill="#999"/><path d="M22 37 L29.5 24.7 L34.3 29.5 Z" fill="#c8c8c8"/><path d="M22 37 L28.4 30.6" stroke="#333" stroke-width="0.6"/></g>
</svg></div>
</body></html>
